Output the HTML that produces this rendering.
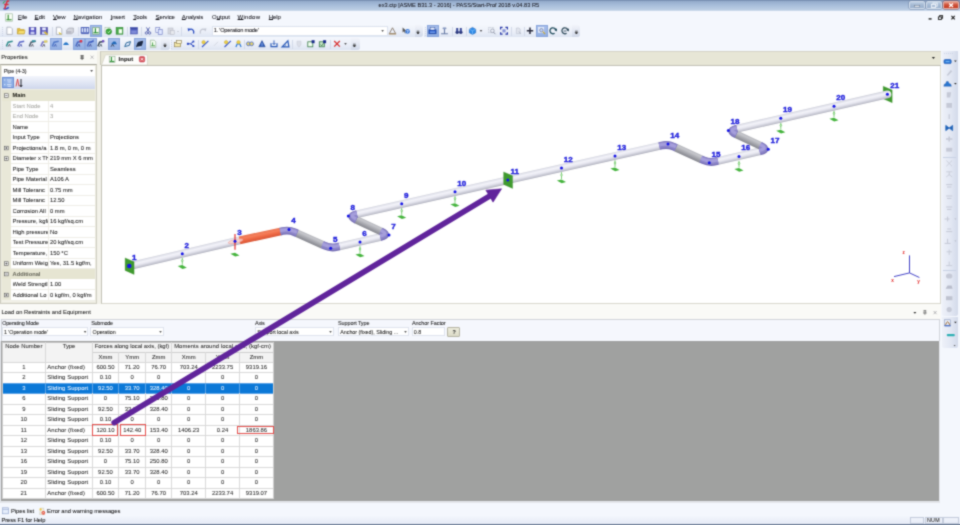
<!DOCTYPE html>
<html><head><meta charset="utf-8"><title>ex3.ctp</title>
<style>
html,body{margin:0;padding:0;}
body{width:960px;height:525px;overflow:hidden;position:relative;background:#f4f7fd;font-family:"Liberation Sans",sans-serif;}
.t{position:absolute;white-space:nowrap;overflow:visible;-webkit-text-stroke:0.06px currentColor;}
.r{position:absolute;box-sizing:border-box;}
u{text-decoration-thickness:inherit;text-underline-offset:inherit;}
svg{position:absolute;left:0;top:0;overflow:visible;}
#w{position:absolute;left:0;top:0;width:960px;height:525px;overflow:hidden;background:#f4f7fd;filter:url(#bl);}
</style></head><body><svg width="0" height="0" style="position:absolute"><filter id="bl" x="0" y="0" width="100%" height="100%" color-interpolation-filters="sRGB"><feConvolveMatrix order="3" kernelMatrix="1 3 1 3 12 3 1 3 1" divisor="28" edgeMode="duplicate" preserveAlpha="true"/></filter></svg><div id="w">
<div class="r" style="left:0.00px;top:0.00px;width:960.00px;height:11.20px;background:linear-gradient(#61779a 0,#93aacb 9%,#a6bcd9 45%,#bdcfe5 92%,#d9e3f1 100%);"></div>
<svg width="960" height="12"><path d="M3.4 8.6 Q6.2 9.6 8.8 7.4" stroke="#3a48c0" stroke-width="1.5" fill="none"/><path d="M3 3.6 Q3.6 1.6 5.4 1.2" stroke="#4aa060" stroke-width="1.1" fill="none"/><path d="M4.6 9 L7 1.6 Q7.6 0.6 9.2 1.4 M4.2 4.6 H8.6" stroke="#d83040" stroke-width="1.5" fill="none"/></svg>
<div class="t" style="left:378.50px;top:2.48px;font-size:5.70px;line-height:6.84px;height:6.84px;color:#1a1a22;letter-spacing:-0.022px;">ex3.ctp [ASME B31.3 - 2016] - PASS/Start-Prof 2018 v.04.83 R5</div>
<div class="r" style="left:909.40px;top:1.20px;width:15.60px;height:8.30px;background:linear-gradient(#bfd0e4,#a4b9d3 50%,#9cb2ce);border:0.7px solid #d3deec;border-radius:1.5px;box-shadow:0 0 0 0.5px #7388a8;"></div>
<div class="r" style="left:926.40px;top:1.20px;width:15.60px;height:8.30px;background:linear-gradient(#bfd0e4,#a4b9d3 50%,#9cb2ce);border:0.7px solid #d3deec;border-radius:1.5px;box-shadow:0 0 0 0.5px #7388a8;"></div>
<div class="r" style="left:943.40px;top:1.20px;width:15.40px;height:8.30px;background:linear-gradient(#e6a090,#d0543c 45%,#c43c24);border:0.7px solid #e8b0a4;border-radius:1.5px;box-shadow:0 0 0 0.5px #7a4a54;"></div>
<svg width="960" height="12"><rect x="914.4" y="5.6" width="5.4" height="1.4" fill="#fff" stroke="#5b6b82" stroke-width="0.4"/><rect x="933" y="3" width="4.2" height="3.2" fill="none" stroke="#eef3fa" stroke-width="0.9"/><rect x="931.4" y="4.4" width="4.2" height="3" fill="#a9bdd6" stroke="#eef3fa" stroke-width="0.9"/><path d="M949.2 3.6 L953 7 M953 3.6 L949.2 7" stroke="#fff" stroke-width="1.3"/></svg>
<div class="r" style="left:0.00px;top:11.20px;width:960.00px;height:13.30px;background:#f4f7fd;"></div>
<svg width="960" height="30"><rect x="5.7" y="13.8" width="6.6" height="7.4" fill="#f6fbf2" stroke="#9ab89a" stroke-width="0.6"/><path d="M8.2 14.8 V19.8 H11.6 M6.4 19.8 H8.2" stroke="#2a8a2a" stroke-width="1.1" fill="none"/></svg>
<div class="t" style="left:18.00px;top:14.20px;font-size:6.00px;line-height:7.20px;height:7.20px;color:#15151c;letter-spacing:-0.120px;text-decoration-thickness:0.45px;text-underline-offset:0.4px;"><u>F</u>ile</div>
<div class="t" style="left:34.60px;top:14.20px;font-size:6.00px;line-height:7.20px;height:7.20px;color:#15151c;letter-spacing:0.015px;text-decoration-thickness:0.45px;text-underline-offset:0.4px;"><u>E</u>dit</div>
<div class="t" style="left:53.00px;top:14.20px;font-size:6.00px;line-height:7.20px;height:7.20px;color:#15151c;letter-spacing:-0.120px;text-decoration-thickness:0.45px;text-underline-offset:0.4px;"><u>V</u>iew</div>
<div class="t" style="left:73.40px;top:14.20px;font-size:6.00px;line-height:7.20px;height:7.20px;color:#15151c;letter-spacing:0.065px;text-decoration-thickness:0.45px;text-underline-offset:0.4px;"><u>N</u>avigation</div>
<div class="t" style="left:110.60px;top:14.20px;font-size:6.00px;line-height:7.20px;height:7.20px;color:#15151c;letter-spacing:-0.120px;text-decoration-thickness:0.45px;text-underline-offset:0.4px;"><u>I</u>nsert</div>
<div class="t" style="left:133.20px;top:14.20px;font-size:6.00px;line-height:7.20px;height:7.20px;color:#15151c;letter-spacing:-0.041px;text-decoration-thickness:0.45px;text-underline-offset:0.4px;"><u>T</u>ools</div>
<div class="t" style="left:155.60px;top:14.20px;font-size:6.00px;line-height:7.20px;height:7.20px;color:#15151c;letter-spacing:-0.120px;text-decoration-thickness:0.45px;text-underline-offset:0.4px;"><u>S</u>ervice</div>
<div class="t" style="left:181.80px;top:14.20px;font-size:6.00px;line-height:7.20px;height:7.20px;color:#15151c;letter-spacing:-0.118px;text-decoration-thickness:0.45px;text-underline-offset:0.4px;"><u>A</u>nalysis</div>
<div class="t" style="left:212.00px;top:14.20px;font-size:6.00px;line-height:7.20px;height:7.20px;color:#15151c;letter-spacing:-0.002px;text-decoration-thickness:0.45px;text-underline-offset:0.4px;">O<u>u</u>tput</div>
<div class="t" style="left:237.60px;top:14.20px;font-size:6.00px;line-height:7.20px;height:7.20px;color:#15151c;letter-spacing:0.210px;text-decoration-thickness:0.45px;text-underline-offset:0.4px;"><u>W</u>indow</div>
<div class="t" style="left:268.80px;top:14.20px;font-size:6.00px;line-height:7.20px;height:7.20px;color:#15151c;letter-spacing:-0.120px;text-decoration-thickness:0.45px;text-underline-offset:0.4px;"><u>H</u>elp</div>
<svg width="960" height="30"><rect x="928.6" y="18.2" width="3" height="1.4" fill="#222"/><rect x="939.6" y="15.6" width="3" height="2.6" fill="none" stroke="#222" stroke-width="0.9"/><rect x="938.4" y="16.9" width="3" height="2.6" fill="#f4f7fd" stroke="#222" stroke-width="0.9"/><path d="M951.4 15.8 L954.8 19.4 M954.8 15.8 L951.4 19.4" stroke="#222" stroke-width="1.1"/></svg>
<div class="r" style="left:0.00px;top:24.50px;width:960.00px;height:26.00px;background:#f4f7fd;"></div>
<div class="r" style="left:0.00px;top:24.60px;width:423.00px;height:12.80px;background:linear-gradient(#f4f7fc,#ebeff8 55%,#dee5f2);border-radius:0 3px 3px 0;"></div>
<div class="r" style="left:424.00px;top:24.60px;width:155.60px;height:12.80px;background:linear-gradient(#f4f7fc,#ebeff8 55%,#dee5f2);border-radius:0 3px 3px 0;"></div>
<div class="r" style="left:0.00px;top:37.60px;width:170.00px;height:12.80px;background:linear-gradient(#f3f6fc,#eaeef8 55%,#dde4f1);border-radius:0 3px 3px 0;"></div>
<div class="r" style="left:170.60px;top:37.60px;width:189.40px;height:12.80px;background:linear-gradient(#f3f6fc,#eaeef8 55%,#dde4f1);border-radius:0 3px 3px 0;"></div>
<div class="r" style="left:414.60px;top:24.60px;width:8.40px;height:12.80px;background:linear-gradient(#f2f4fa,#e2e7f2 50%,#d0d8e8);border-radius:0 3px 3px 0;"></div>
<div class="r" style="left:571.60px;top:24.60px;width:8.40px;height:12.80px;background:linear-gradient(#f2f4fa,#e2e7f2 50%,#d0d8e8);border-radius:0 3px 3px 0;"></div>
<div class="r" style="left:161.40px;top:37.60px;width:8.40px;height:12.80px;background:linear-gradient(#f2f4fa,#e2e7f2 50%,#d0d8e8);border-radius:0 3px 3px 0;"></div>
<div class="r" style="left:351.40px;top:37.60px;width:8.40px;height:12.80px;background:linear-gradient(#f2f4fa,#e2e7f2 50%,#d0d8e8);border-radius:0 3px 3px 0;"></div>
<div class="r" style="left:90.00px;top:24.60px;width:12.00px;height:12.40px;background:linear-gradient(#a6bdea,#94b0e2);border:0.4px solid #8aa6dc;"></div>
<div class="r" style="left:426.50px;top:24.60px;width:12.00px;height:12.40px;background:linear-gradient(#a6bdea,#94b0e2);border:0.4px solid #8aa6dc;"></div>
<div class="r" style="left:536.00px;top:24.60px;width:12.00px;height:12.40px;background:linear-gradient(#a6bdea,#94b0e2);border:0.4px solid #8aa6dc;"></div>
<div class="r" style="left:211.50px;top:25.80px;width:176.50px;height:10.00px;background:#fff;border:0.5px solid #dde3ef;"></div>
<div class="t" style="left:213.70px;top:27.48px;font-size:5.70px;line-height:6.84px;height:6.84px;color:#15151c;letter-spacing:-0.231px;">1. 'Operation mode'</div>
<div class="r" style="left:49.50px;top:37.60px;width:12.00px;height:12.40px;background:linear-gradient(#a6bdea,#94b0e2);border:0.4px solid #8aa6dc;"></div>
<div class="r" style="left:73.00px;top:37.60px;width:12.00px;height:12.40px;background:linear-gradient(#a6bdea,#94b0e2);border:0.4px solid #8aa6dc;"></div>
<div class="r" style="left:84.50px;top:37.60px;width:12.00px;height:12.40px;background:linear-gradient(#a6bdea,#94b0e2);border:0.4px solid #8aa6dc;"></div>
<div class="r" style="left:108.00px;top:37.60px;width:12.00px;height:12.40px;background:linear-gradient(#a6bdea,#94b0e2);border:0.4px solid #8aa6dc;"></div>
<div class="r" style="left:133.50px;top:37.60px;width:12.00px;height:12.40px;background:linear-gradient(#a6bdea,#94b0e2);border:0.4px solid #8aa6dc;"></div>
<div class="r" style="left:2.20px;top:26.50px;width:1.00px;height:9.00px;background:repeating-linear-gradient(#ccd4e6 0,#ccd4e6 1px,transparent 1px,transparent 2px);"></div>
<div class="r" style="left:2.20px;top:39.50px;width:1.00px;height:9.00px;background:repeating-linear-gradient(#ccd4e6 0,#ccd4e6 1px,transparent 1px,transparent 2px);"></div>
<div class="r" style="left:424.60px;top:26.50px;width:1.00px;height:9.00px;background:repeating-linear-gradient(#ccd4e6 0,#ccd4e6 1px,transparent 1px,transparent 2px);"></div>
<div class="r" style="left:171.00px;top:39.50px;width:1.00px;height:9.00px;background:repeating-linear-gradient(#ccd4e6 0,#ccd4e6 1px,transparent 1px,transparent 2px);"></div>
<div class="r" style="left:51.50px;top:26.60px;width:0.60px;height:9.00px;background:#d3dae9;"></div>
<div class="r" style="left:77.50px;top:26.60px;width:0.60px;height:9.00px;background:#d3dae9;"></div>
<div class="r" style="left:126.50px;top:26.60px;width:0.60px;height:9.00px;background:#d3dae9;"></div>
<div class="r" style="left:141.00px;top:26.60px;width:0.60px;height:9.00px;background:#d3dae9;"></div>
<div class="r" style="left:181.00px;top:26.60px;width:0.60px;height:9.00px;background:#d3dae9;"></div>
<div class="r" style="left:451.50px;top:26.60px;width:0.60px;height:9.00px;background:#d3dae9;"></div>
<div class="r" style="left:466.00px;top:26.60px;width:0.60px;height:9.00px;background:#d3dae9;"></div>
<div class="r" style="left:511.00px;top:26.60px;width:0.60px;height:9.00px;background:#d3dae9;"></div>
<div class="r" style="left:523.50px;top:26.60px;width:0.60px;height:9.00px;background:#d3dae9;"></div>
<div class="r" style="left:198.00px;top:39.60px;width:0.60px;height:9.00px;background:#d3dae9;"></div>
<div class="r" style="left:243.50px;top:39.60px;width:0.60px;height:9.00px;background:#d3dae9;"></div>
<div class="r" style="left:292.00px;top:39.60px;width:0.60px;height:9.00px;background:#d3dae9;"></div>
<div class="r" style="left:329.50px;top:39.60px;width:0.60px;height:9.00px;background:#d3dae9;"></div>
<svg width="960" height="60"><g transform="translate(9.50 30.80)"><path d="M-2.6 -3.6 H1.2 L2.8 -2 V3.6 H-2.6 Z" fill="#fff" stroke="#8a90a0" stroke-width="0.6"/></g><g transform="translate(21.00 30.80)"><path d="M-3.6 -2.2 H-1 L-0.2 -1.2 H3.2 V3 H-3.6 Z" fill="#e9c23c" stroke="#b08a18" stroke-width="0.5"/><path d="M-3.6 3 L-2.2 -0.2 H4.2 L3.2 3 Z" fill="#f6de72" stroke="#b08a18" stroke-width="0.4"/></g><g transform="translate(32.50 30.80)"><rect x="-3.4" y="-3.4" width="6.8" height="6.8" fill="#4a48c0" stroke="#2c2a88" stroke-width="0.5"/><rect x="-1.8" y="-3.2" width="3.6" height="2.6" fill="#e8ecff"/><rect x="-2" y="0.8" width="4" height="2.6" fill="#c8ccf0"/></g><g transform="translate(44.00 30.80)"><rect x="-3.4" y="-3.4" width="6.8" height="6.8" fill="#5a58b8" stroke="#2c2a88" stroke-width="0.5"/><rect x="-1.8" y="-3.2" width="3.6" height="2.6" fill="#e8ecff"/><rect x="-2" y="0.8" width="4" height="2.6" fill="#c8ccf0"/><path d="M0.5 1 L3.6 3.8" stroke="#d8b830" stroke-width="1.6"/></g><g transform="translate(59.00 30.80)"><path d="M-2.6 -3.6 H1.2 L2.8 -2 V3.6 H-2.6 Z" fill="#fff" stroke="#8a90a0" stroke-width="0.6"/><path d="M-0.5 1 L3.4 3.4 L0.5 3.6 Z" fill="#d8c040"/></g><g transform="translate(70.00 30.80)"><path d="M-3.4 -0.6 L-1.4 -2.8 H3.4 V1.6 L1.4 3 H-3.4 Z" fill="#d4d6de" stroke="#8a8c98" stroke-width="0.5"/><rect x="-3.2" y="0.2" width="4.6" height="2.4" fill="#b8bac6"/></g><g transform="translate(85.00 30.80)"><rect x="-3.8" y="-3.2" width="7.6" height="5.2" fill="#e8f0ff" stroke="#3a50b0" stroke-width="0.9"/><path d="M-1.3 -3 V1.4 M1.3 -3 V1.4 M-3.8 2.8 H3.8" stroke="#3a50b0" stroke-width="0.9"/></g><g transform="translate(96.00 30.80)"><rect x="-3.2" y="-3.4" width="6.4" height="6.8" fill="#f4fbf0" stroke="#6c9a6c" stroke-width="0.6"/><path d="M-0.6 -2.6 V2 H2.6 M-2.6 2 H-0.6" stroke="#1f8a2a" stroke-width="1.1" fill="none"/></g><g transform="translate(108.00 30.80)"><rect x="-3" y="-3.4" width="5" height="6" fill="#f4fbf0" stroke="#9ab89a" stroke-width="0.5"/><circle cx="0.8" cy="0.8" r="2.8" fill="#3aa83a" stroke="#1d7a22" stroke-width="0.5"/><path d="M-0.6 0.8 L0.6 2 L2.4 -0.4" stroke="#d8ffd0" stroke-width="0.8" fill="none"/></g><g transform="translate(119.50 30.80)"><rect x="-3.4" y="-3.4" width="6.8" height="6.8" fill="#4aa84a" stroke="#1d7a22" stroke-width="0.5"/><rect x="-0.8" y="-1.6" width="3.4" height="4.2" fill="#f4fff0"/></g><g transform="translate(134.00 30.80)"><rect x="-3.4" y="-3.2" width="6.8" height="6.4" fill="#5866c4" stroke="#3c4aa6" stroke-width="0.5"/><rect x="-3.4" y="-3.2" width="6.8" height="1.8" fill="#3c4aa6"/><path d="M-2.6 0.4 H2.6 M-2.6 2 H2.6" stroke="#aab6ee" stroke-width="0.7"/></g><g transform="translate(148.00 30.80)"><path d="M-1.6 -3.4 L1.2 1 M1.6 -3.4 L-1.2 1" stroke="#4a58a8" stroke-width="0.9"/><circle cx="-1.6" cy="2.2" r="1.2" fill="none" stroke="#4a58a8" stroke-width="0.8"/><circle cx="1.6" cy="2.2" r="1.2" fill="none" stroke="#4a58a8" stroke-width="0.8"/></g><g transform="translate(159.00 30.80)"><rect x="-3.2" y="-3.2" width="4" height="5" fill="#eef2ff" stroke="#6a78c0" stroke-width="0.6"/><rect x="-0.8" y="-1.4" width="4" height="5" fill="#dfe6ff" stroke="#6a78c0" stroke-width="0.6"/></g><g transform="translate(171.00 30.80)"><rect x="-3" y="-2.8" width="5" height="6" fill="#d6d8e0" stroke="#b4b6c2" stroke-width="0.5"/><rect x="-0.4" y="-0.4" width="3.6" height="4" fill="#e6e8ee" stroke="#b4b6c2" stroke-width="0.5"/><g transform="translate(7 0.6)"><path d="M-1 -0.5 H1 L0 0.7 Z" fill="#b0b4c0"/></g></g><g transform="translate(191.00 30.80)"><path d="M2.6 2.8 C3.6 -1 0.6 -2.6 -1.8 -0.8" stroke="#2a4cc0" stroke-width="1.3" fill="none"/><path d="M-3.4 -2.6 L-0.6 -2 L-2.8 0.8 Z" fill="#2a4cc0"/></g><g transform="translate(203.00 30.80)"><path d="M-2.6 2.8 C-3.6 -1 -0.6 -2.6 1.8 -0.8" stroke="#c2c6d2" stroke-width="1.2" fill="none"/><path d="M3.4 -2.6 L0.6 -2 L2.8 0.8 Z" fill="#c2c6d2"/></g><g transform="translate(382.60 30.80)"><path d="M-1.3 -0.6 H1.3 L0 0.9 Z" fill="#222"/></g><g transform="translate(392.50 30.80)"><path d="M-3.2 2.8 L0 -3 L3.2 2.8 Z" fill="none" stroke="#7a6a58" stroke-width="0.8"/><path d="M-3.6 3.2 H3.6" stroke="#b09060" stroke-width="0.9"/></g><g transform="translate(406.00 30.80)"><path d="M-3.4 -3.2 L-3.4 1.6 L-2 0.4 L-1 2.6 L-0.2 2.2 L-1.2 0.2 L0.2 0 Z" fill="#555" /><circle cx="1.6" cy="0.6" r="2.3" fill="#3a78d8"/><text x="0.6" y="2" font-size="3.6" fill="#fff" font-weight="bold" font-family="Liberation Sans, sans-serif">?</text></g><g transform="translate(418.00 30.80)"><path d="M-1.3 0.4 H1.3 M-1.2 1.8 H1.2 L0 3.2 Z" stroke="#222" stroke-width="0.7" fill="#222"/></g><g transform="translate(432.50 30.80)"><rect x="-3.6" y="-1" width="7.2" height="4" fill="#2458c8" stroke="#16388a" stroke-width="0.5"/><rect x="-2.4" y="-3.4" width="4.8" height="2.6" fill="#e6eeff" stroke="#16388a" stroke-width="0.4"/><rect x="-2.6" y="0.8" width="5.2" height="1" fill="#9cc0ff"/></g><g transform="translate(444.50 30.80)"><path d="M-3.4 3 H3.4 M0 3 V-2.2 M-1.8 -2.4 H1.8" stroke="#6a7ea8" stroke-width="1.1" fill="none"/><rect x="-1.4" y="-3.2" width="2.8" height="1.6" fill="#8a9cc4"/></g><g transform="translate(459.00 30.80)"><circle cx="-1.8" cy="1.4" r="1.7" fill="#27357a"/><circle cx="1.8" cy="1.4" r="1.7" fill="#27357a"/><rect x="-2.8" y="-2.8" width="2" height="3.6" fill="#3a4a98"/><rect x="0.8" y="-2.8" width="2" height="3.6" fill="#3a4a98"/></g><g transform="translate(472.50 30.80)"><path d="M-3.2 -1.6 L0 -3.4 L3.2 -1.6 V2 L0 3.6 L-3.2 2 Z" fill="#2c8ae8" stroke="#1a5cb0" stroke-width="0.5"/><path d="M-3.2 -1.6 L0 0 L3.2 -1.6 M0 0 V3.6" stroke="#9fd0ff" stroke-width="0.5" fill="none"/></g><g transform="translate(481.00 30.80)"><path d="M-1.3 -0.6 H1.3 L0 0.9 Z" fill="#222"/></g><g transform="translate(492.00 30.80)"><rect x="-3.4" y="-3.2" width="5" height="5" fill="none" stroke="#a8acba" stroke-width="0.6" stroke-dasharray="1 0.6"/><circle cx="0.4" cy="0" r="1.8" fill="#eef2fa" stroke="#8e94a6" stroke-width="0.7"/><path d="M1.6 1.4 L3.4 3.4" stroke="#8e94a6" stroke-width="1"/></g><g transform="translate(504.00 30.80)"><path d="M-3.4 -1.4 V-3.4 H-1.4 M1.4 -3.4 H3.4 V-1.4 M3.4 1.4 V3.4 H1.4 M-1.4 3.4 H-3.4 V1.4" stroke="#2a3aa8" stroke-width="1.2" fill="none"/><rect x="-1.6" y="-1.6" width="3.2" height="3.2" fill="#8a96d8"/></g><g transform="translate(518.00 30.80)"><path d="M-1.6 -2.8 H1 L2.2 -1.6 V2.8 H-1.6 Z" fill="#e2e5ee" stroke="#b6bac8" stroke-width="0.5"/><path d="M0.8 0.6 L2.8 3.2" stroke="#b6bac8" stroke-width="0.9"/></g><g transform="translate(530.00 30.80)"><path d="M0 -3.2 V3.2 M-3.2 0 H3.2" stroke="#26283a" stroke-width="1.5"/></g><g transform="translate(542.00 30.80)"><rect x="-3.6" y="-3.4" width="5.4" height="5" fill="#dfe8fb" stroke="#f4f7ff" stroke-width="0.5"/><circle cx="-0.6" cy="-0.6" r="1.7" fill="#c4d4f4" stroke="#5a6a90" stroke-width="0.6"/><path d="M0.8 0.8 L3.2 3.4" stroke="#c8a838" stroke-width="1.1"/></g><g transform="translate(553.00 30.80)"><path d="M2.9 -0.4 A3 3 0 1 0 1.6 2.5" stroke="#1e4a5a" stroke-width="1.3" fill="none"/><path d="M1.2 -1 L4 -2.4 L3.8 0.8 Z" fill="#1e4a5a"/></g><g transform="translate(565.00 30.80)"><path d="M2.9 -0.4 A3 3 0 1 0 1.6 2.5" stroke="#2c4858" stroke-width="1.2" fill="none"/><path d="M1.2 -1 L4 -2.4 L3.8 0.8 Z" fill="#2c4858"/><path d="M-1.4 0.2 H1.4" stroke="#2c4858" stroke-width="0.9"/></g><g transform="translate(576.40 30.80)"><path d="M-1.3 0.4 H1.3 M-1.2 1.8 H1.2 L0 3.2 Z" stroke="#222" stroke-width="0.7" fill="#222"/></g><g transform="translate(9.50 43.80)"><path d="M-3.2 2.6 L-1.4 -1.6 L3.2 -2.6" stroke="#2f8c8c" stroke-width="1.4" fill="none"/><path d="M-1.6 3 L0 0.4 L0.8 2.8" stroke="#4a4a58" stroke-width="0.8" fill="none"/></g><g transform="translate(21.00 43.80)"><path d="M-3.2 2.6 L-1.4 -1.6 L3.2 -2.6" stroke="#5a68c8" stroke-width="1.4" fill="none"/><path d="M-1.6 3 L0 0.4 L0.8 2.8" stroke="#3a48a8" stroke-width="0.8" fill="none"/></g><g transform="translate(32.50 43.80)"><path d="M-3.2 2.6 L-1.4 -1.6 L3.2 -2.6" stroke="#4a5a68" stroke-width="1.4" fill="none"/><path d="M-1.6 3 L0 0.4 L0.8 2.8" stroke="#4a4a58" stroke-width="0.8" fill="none"/><rect x="-0.6" y="-3.6" width="3.6" height="1.8" fill="#2f8c9c"/></g><g transform="translate(44.00 43.80)"><path d="M-3.2 2.6 L-1.4 -1.6 L3.2 -2.6" stroke="#7a78c8" stroke-width="1.4" fill="none"/><path d="M-1.6 3 L0 0.4 L0.8 2.8" stroke="#4a4a58" stroke-width="0.8" fill="none"/><rect x="0" y="-3.4" width="3.4" height="2.2" fill="#e0d060"/></g><g transform="translate(55.50 43.80)"><path d="M-3.2 2.6 L-1.4 -1.6 L3.2 -2.6" stroke="#5078c8" stroke-width="1.4" fill="none"/><path d="M-1.6 3 L0 0.4 L0.8 2.8" stroke="#3a58b0" stroke-width="0.8" fill="none"/></g><g transform="translate(66.00 43.80)"><path d="M-3 1.2 H3 L1.6 -0.8 Q0 -2.2 -1.6 -0.8 Z" fill="#2a78c8"/></g><g transform="translate(79.00 43.80)"><path d="M-3.2 2.6 L-1.4 -1.6 L3.2 -2.6" stroke="#4a68c0" stroke-width="1.4" fill="none"/><path d="M-1.6 3 L0 0.4 L0.8 2.8" stroke="#3a4890" stroke-width="0.8" fill="none"/><rect x="0.6" y="-3.8" width="2.6" height="2.4" fill="#e03848"/></g><g transform="translate(90.50 43.80)"><path d="M-3.2 2.6 L-1.4 -1.6 L3.2 -2.6" stroke="#4a68c0" stroke-width="1.4" fill="none"/><path d="M-1.6 3 L0 0.4 L0.8 2.8" stroke="#3a4890" stroke-width="0.8" fill="none"/><path d="M0 -1 L3 -3.6" stroke="#3050c0" stroke-width="1"/></g><g transform="translate(101.00 43.80)"><path d="M-3.2 2.6 L-1.4 -1.6 L3.2 -2.6" stroke="#3a4a5a" stroke-width="1.4" fill="none"/><path d="M-1.6 3 L0 0.4 L0.8 2.8" stroke="#3a4a5a" stroke-width="0.8" fill="none"/><rect x="1" y="-3.6" width="2.2" height="2" fill="#6a48c0"/></g><g transform="translate(114.00 43.80)"><path d="M-3 0.4 H3 L1.4 -2.4 H-0.6 Z" fill="#1f68b8"/><path d="M-3 3 L-1.4 0.4 L0 2.8" stroke="#33425a" stroke-width="0.9" fill="none"/></g><g transform="translate(127.50 43.80)"><path d="M-2.8 2.8 L-1.2 -1 L3 -2.2 L1.8 1.6 Z" fill="#dfe8fb" stroke="#2f6a9a" stroke-width="1"/></g><g transform="translate(139.50 43.80)"><path d="M-3 2.8 L-1.4 -1.4 L3.2 -2.6 L2 1.6 Z" fill="#1a2a4a" stroke="#101828" stroke-width="0.8"/><path d="M-2.4 3.4 H1.6" stroke="#e8eefc" stroke-width="0.8"/></g><g transform="translate(153.00 43.80)"><path d="M-2.6 -3.6 H1.2 L2.8 -2 V3.6 H-2.6 Z" fill="#f6fff2" stroke="#8aa88a" stroke-width="0.6"/><path d="M-0.4 -1.4 V2 H2 M-1.8 2 H-0.4" stroke="#2a8a2a" stroke-width="0.8" fill="none"/></g><g transform="translate(165.00 43.80)"><path d="M-1.3 0.4 H1.3 M-1.2 1.8 H1.2 L0 3.2 Z" stroke="#222" stroke-width="0.7" fill="#222"/></g><g transform="translate(178.00 43.80)"><rect x="-3.4" y="-1.4" width="6" height="4.4" fill="#f4e8a8" stroke="#8a7a48" stroke-width="0.6"/><rect x="-1.4" y="-3.2" width="4.8" height="3" fill="#fbf6d8" stroke="#8a7a48" stroke-width="0.6"/></g><g transform="translate(190.50 43.80)"><path d="M-3 0 H0 M0 0 L3 -2.2 M0 0 L3 2.2" stroke="#2a48c0" stroke-width="1" fill="none"/><rect x="-3.6" y="-1" width="2" height="2" fill="#2a48c0"/><rect x="2" y="-3.2" width="1.8" height="1.8" fill="#2a48c0"/><rect x="2" y="1.4" width="1.8" height="1.8" fill="#2a48c0"/></g><g transform="translate(205.00 43.80)"><path d="M-3 3.2 L3.4 -3" stroke="#3a58c8" stroke-width="1.1"/><circle cx="-1.4" cy="-1.6" r="1.7" fill="#ecd048" stroke="#b89a28" stroke-width="0.4"/></g><g transform="translate(216.00 43.80)"><path d="M-2 2 L2 -2" stroke="#d4d8e2" stroke-width="1"/></g><g transform="translate(227.50 43.80)"><path d="M-3 3.2 L3.4 -3" stroke="#3a58c8" stroke-width="1.1"/><circle cx="-1.4" cy="-1.6" r="1.7" fill="#ecd048" stroke="#b89a28" stroke-width="0.4"/></g><g transform="translate(238.50 43.80)"><path d="M-2.6 3.2 L-1.2 0 L1.2 0 L2.6 3.2" stroke="#2a78d8" stroke-width="1.2" fill="none"/><circle cx="0" cy="-1.6" r="1.7" fill="#ecd048" stroke="#b89a28" stroke-width="0.4"/></g><g transform="translate(250.00 43.80)"><circle cx="-1.6" cy="0" r="1.9" fill="#e8d468" stroke="#4a68c8" stroke-width="0.8"/><circle cx="1.6" cy="0" r="1.9" fill="#e8d468" stroke="#4a68c8" stroke-width="0.8"/></g><g transform="translate(262.00 43.80)"><path d="M-3.2 3 L0 -3.2 L3.2 3 Z" fill="#2a5ab8" stroke="#1c3c88" stroke-width="0.5"/><path d="M0 -1 V2" stroke="#bcd0ff" stroke-width="0.7"/></g><g transform="translate(274.00 43.80)"><path d="M-3 -0.6 V2.8 H3 V-0.6" stroke="#2a5ab8" stroke-width="1.2" fill="none"/><path d="M0 -3.4 V0.6 M-1.4 -0.8 L0 0.8 L1.4 -0.8" stroke="#2a5ab8" stroke-width="0.9" fill="none"/></g><g transform="translate(285.50 43.80)"><path d="M-3.4 3 H3.4 L2.4 -3 Z" fill="none" stroke="#2a5ab8" stroke-width="1.2"/><path d="M-1 3 A2.6 2.6 0 0 1 0.6 0.8" stroke="#2a5ab8" stroke-width="0.7" fill="none"/></g><g transform="translate(299.00 43.80)"><path d="M-2 -2.6 H2 V0.4 L0.6 3 H-0.6 L-2 0.4 Z" fill="#dcdfe8" stroke="#c4c8d4" stroke-width="0.5"/></g><g transform="translate(311.00 43.80)"><rect x="-3.2" y="-2" width="5" height="5" fill="#f2fff0" stroke="#3a7a4a" stroke-width="0.8"/><rect x="0.6" y="-3.6" width="3" height="3" fill="#1a2a8a"/></g><g transform="translate(322.50 43.80)"><rect x="-3.2" y="-2" width="5" height="5" fill="#c8e8c8" stroke="#3a7a4a" stroke-width="0.8"/><rect x="0.6" y="-3.6" width="3" height="3" fill="#1a2a8a"/><path d="M-2 0.8 L-0.6 2 L1 -0.6" stroke="#2a6a3a" stroke-width="0.7" fill="none"/></g><g transform="translate(337.00 43.80)"><path d="M-2.8 -2.8 L2.8 2.8 M2.8 -2.8 L-2.8 2.8" stroke="#d83030" stroke-width="1.3"/></g><g transform="translate(345.50 43.80)"><path d="M-1.3 -0.6 H1.3 L0 0.9 Z" fill="#222"/></g><g transform="translate(354.40 43.80)"><path d="M-1.3 0.4 H1.3 M-1.2 1.8 H1.2 L0 3.2 Z" stroke="#222" stroke-width="0.7" fill="#222"/></g></svg>
<div class="r" style="left:0.00px;top:50.50px;width:941.00px;height:254.00px;background:#f3f2ea;"></div>
<div class="r" style="left:0.00px;top:50.80px;width:97.20px;height:13.40px;background:#f9f9f5;"></div>
<div class="t" style="left:1.20px;top:53.66px;font-size:5.90px;line-height:7.08px;height:7.08px;color:#1c1c1c;letter-spacing:-0.049px;">Properties</div>
<svg width="960" height="70"><path d="M80.6 55.6 H83.6 M81.2 57 H83 M81.2 55.6 V58.2 M83 55.6 V58.2 M80.4 58.4 H83.8 M82.1 58.4 V60" stroke="#333" stroke-width="0.7" fill="none"/><path d="M90.6 55.6 L93.6 58.8 M93.6 55.6 L90.6 58.8" stroke="#9a9aa0" stroke-width="0.6"/></svg>
<div class="r" style="left:0.00px;top:63.80px;width:97.20px;height:240.00px;background:#ecebe0;border:1px solid #cfcec2;border-top:1.9px solid #a5a49b;"></div>
<div class="r" style="left:1.60px;top:66.20px;width:93.60px;height:9.40px;background:#fff;"></div>
<div class="t" style="left:3.80px;top:67.70px;font-size:5.50px;line-height:6.60px;height:6.60px;color:#1c1c1c;letter-spacing:-0.165px;">Pipe (4-3)</div>
<svg width="960" height="90"><path d="M90.2 70.2 H93 L91.6 71.8 Z" fill="#222"/></svg>
<div class="r" style="left:1.60px;top:75.60px;width:93.60px;height:13.80px;background:linear-gradient(#f3f5fc,#e3e8f5 45%,#cfd7ec);"></div>
<div class="r" style="left:1.80px;top:77.00px;width:12.00px;height:10.80px;background:#8fb0e6;border:0.5px solid #6c8ed2;"></div>
<svg width="960" height="95"><path d="M4 80 H5.4 M4 84.6 H5.4 M7 80 H11.4 M7 84.6 H11.4 M7.6 82 H11 M7.6 86.4 H11" stroke="#e8f0ff" stroke-width="0.8"/><path d="M16 86.4 L17.6 79 L19 86.4" stroke="#d83a3a" stroke-width="0.9" fill="none"/><path d="M21 79 V86.6 M19.8 85 L21 86.8 L22.2 85" stroke="#15151c" stroke-width="0.9" fill="none"/></svg>
<div class="r" style="left:1.60px;top:90.30px;width:93.60px;height:210.00px;background:#fff;"></div>
<div class="r" style="left:1.60px;top:90.30px;width:9.60px;height:210.00px;background:#e9e8d8;"></div>
<div class="r" style="left:1.60px;top:300.30px;width:93.60px;height:1.70px;background:#f2f1e8;"></div>
<div class="r" style="left:1.60px;top:90.30px;width:93.60px;height:10.50px;background:#e6e5d2;"></div>
<div class="t" style="left:12.60px;top:92.13px;font-size:5.70px;line-height:6.84px;height:6.84px;color:#26261e;font-weight:bold;">Main</div>
<div class="t" style="left:12.6px;top:100.80px;width:35.2px;height:10.50px;overflow:hidden;font-size:5.85px;line-height:10.50px;color:#a9a9a4">Start Node</div>
<div class="t" style="left:50px;top:100.80px;width:44.6px;height:10.50px;overflow:hidden;font-size:5.85px;line-height:10.50px;color:#a9a9a4">4</div>
<div class="r" style="left:11.20px;top:110.80px;width:84.00px;height:0.60px;background:#efeee7;"></div>
<div class="t" style="left:12.6px;top:111.30px;width:35.2px;height:10.50px;overflow:hidden;font-size:5.85px;line-height:10.50px;color:#a9a9a4">End Node</div>
<div class="t" style="left:50px;top:111.30px;width:44.6px;height:10.50px;overflow:hidden;font-size:5.85px;line-height:10.50px;color:#a9a9a4">3</div>
<div class="r" style="left:11.20px;top:121.30px;width:84.00px;height:0.60px;background:#efeee7;"></div>
<div class="t" style="left:12.6px;top:121.80px;width:35.2px;height:10.50px;overflow:hidden;font-size:5.85px;line-height:10.50px;color:#1a1a1a">Name</div>
<div class="r" style="left:11.20px;top:131.80px;width:84.00px;height:0.60px;background:#efeee7;"></div>
<div class="t" style="left:12.6px;top:132.30px;width:35.2px;height:10.50px;overflow:hidden;font-size:5.85px;line-height:10.50px;color:#1a1a1a">Input Type</div>
<div class="t" style="left:50px;top:132.30px;width:44.6px;height:10.50px;overflow:hidden;font-size:5.85px;line-height:10.50px;color:#1a1a1a">Projections</div>
<div class="r" style="left:11.20px;top:142.30px;width:84.00px;height:0.60px;background:#efeee7;"></div>
<div class="t" style="left:12.6px;top:142.80px;width:35.2px;height:10.50px;overflow:hidden;font-size:5.85px;line-height:10.50px;color:#1a1a1a">Projections/a</div>
<div class="t" style="left:50px;top:142.80px;width:44.6px;height:10.50px;overflow:hidden;font-size:5.85px;line-height:10.50px;color:#1a1a1a">1.8 m, 0 m, 0 m</div>
<div class="r" style="left:11.20px;top:152.80px;width:84.00px;height:0.60px;background:#efeee7;"></div>
<div class="t" style="left:12.6px;top:153.30px;width:35.2px;height:10.50px;overflow:hidden;font-size:5.85px;line-height:10.50px;color:#1a1a1a">Diameter x Th</div>
<div class="t" style="left:50px;top:153.30px;width:44.6px;height:10.50px;overflow:hidden;font-size:5.85px;line-height:10.50px;color:#1a1a1a">219 mm X 6 mm</div>
<div class="r" style="left:11.20px;top:163.30px;width:84.00px;height:0.60px;background:#efeee7;"></div>
<div class="t" style="left:12.6px;top:163.80px;width:35.2px;height:10.50px;overflow:hidden;font-size:5.85px;line-height:10.50px;color:#1a1a1a">Pipe Type</div>
<div class="t" style="left:50px;top:163.80px;width:44.6px;height:10.50px;overflow:hidden;font-size:5.85px;line-height:10.50px;color:#1a1a1a">Seamless</div>
<div class="r" style="left:11.20px;top:173.80px;width:84.00px;height:0.60px;background:#efeee7;"></div>
<div class="t" style="left:12.6px;top:174.30px;width:35.2px;height:10.50px;overflow:hidden;font-size:5.85px;line-height:10.50px;color:#1a1a1a">Pipe Material</div>
<div class="t" style="left:50px;top:174.30px;width:44.6px;height:10.50px;overflow:hidden;font-size:5.85px;line-height:10.50px;color:#1a1a1a">A106 A</div>
<div class="r" style="left:11.20px;top:184.30px;width:84.00px;height:0.60px;background:#efeee7;"></div>
<div class="t" style="left:12.6px;top:184.80px;width:35.2px;height:10.50px;overflow:hidden;font-size:5.85px;line-height:10.50px;color:#1a1a1a">Mill Toleranc</div>
<div class="t" style="left:50px;top:184.80px;width:44.6px;height:10.50px;overflow:hidden;font-size:5.85px;line-height:10.50px;color:#1a1a1a">0.75 mm</div>
<div class="r" style="left:11.20px;top:194.80px;width:84.00px;height:0.60px;background:#efeee7;"></div>
<div class="t" style="left:12.6px;top:195.30px;width:35.2px;height:10.50px;overflow:hidden;font-size:5.85px;line-height:10.50px;color:#1a1a1a">Mill Toleranc</div>
<div class="t" style="left:50px;top:195.30px;width:44.6px;height:10.50px;overflow:hidden;font-size:5.85px;line-height:10.50px;color:#1a1a1a">12.50</div>
<div class="r" style="left:11.20px;top:205.30px;width:84.00px;height:0.60px;background:#efeee7;"></div>
<div class="t" style="left:12.6px;top:205.80px;width:35.2px;height:10.50px;overflow:hidden;font-size:5.85px;line-height:10.50px;color:#1a1a1a">Corrosion All</div>
<div class="t" style="left:50px;top:205.80px;width:44.6px;height:10.50px;overflow:hidden;font-size:5.85px;line-height:10.50px;color:#1a1a1a">0 mm</div>
<div class="r" style="left:11.20px;top:215.80px;width:84.00px;height:0.60px;background:#efeee7;"></div>
<div class="t" style="left:12.6px;top:216.30px;width:35.2px;height:10.50px;overflow:hidden;font-size:5.85px;line-height:10.50px;color:#1a1a1a">Pressure, kgf/</div>
<div class="t" style="left:50px;top:216.30px;width:44.6px;height:10.50px;overflow:hidden;font-size:5.85px;line-height:10.50px;color:#1a1a1a">16 kgf/sq.cm</div>
<div class="r" style="left:11.20px;top:226.30px;width:84.00px;height:0.60px;background:#efeee7;"></div>
<div class="t" style="left:12.6px;top:226.80px;width:35.2px;height:10.50px;overflow:hidden;font-size:5.85px;line-height:10.50px;color:#1a1a1a">High pressure</div>
<div class="t" style="left:50px;top:226.80px;width:44.6px;height:10.50px;overflow:hidden;font-size:5.85px;line-height:10.50px;color:#1a1a1a">No</div>
<div class="r" style="left:11.20px;top:236.80px;width:84.00px;height:0.60px;background:#efeee7;"></div>
<div class="t" style="left:12.6px;top:237.30px;width:35.2px;height:10.50px;overflow:hidden;font-size:5.85px;line-height:10.50px;color:#1a1a1a">Test Pressure,</div>
<div class="t" style="left:50px;top:237.30px;width:44.6px;height:10.50px;overflow:hidden;font-size:5.85px;line-height:10.50px;color:#1a1a1a">20 kgf/sq.cm</div>
<div class="r" style="left:11.20px;top:247.30px;width:84.00px;height:0.60px;background:#efeee7;"></div>
<div class="t" style="left:12.6px;top:247.80px;width:35.2px;height:10.50px;overflow:hidden;font-size:5.85px;line-height:10.50px;color:#1a1a1a">Temperature,</div>
<div class="t" style="left:50px;top:247.80px;width:44.6px;height:10.50px;overflow:hidden;font-size:5.85px;line-height:10.50px;color:#1a1a1a">150 °C</div>
<div class="r" style="left:11.20px;top:257.80px;width:84.00px;height:0.60px;background:#efeee7;"></div>
<div class="t" style="left:12.6px;top:258.30px;width:35.2px;height:10.50px;overflow:hidden;font-size:5.85px;line-height:10.50px;color:#1a1a1a">Uniform Weig</div>
<div class="t" style="left:50px;top:258.30px;width:44.6px;height:10.50px;overflow:hidden;font-size:5.85px;line-height:10.50px;color:#1a1a1a">Yes, 31.5 kgf/m,</div>
<div class="r" style="left:11.20px;top:268.30px;width:84.00px;height:0.60px;background:#efeee7;"></div>
<div class="r" style="left:1.60px;top:268.80px;width:93.60px;height:10.50px;background:#e6e5d2;"></div>
<div class="t" style="left:12.60px;top:270.63px;font-size:5.70px;line-height:6.84px;height:6.84px;color:#6c6c60;font-weight:bold;">Additional</div>
<div class="t" style="left:12.6px;top:279.30px;width:35.2px;height:10.50px;overflow:hidden;font-size:5.85px;line-height:10.50px;color:#1a1a1a">Weld Strengtl</div>
<div class="t" style="left:50px;top:279.30px;width:44.6px;height:10.50px;overflow:hidden;font-size:5.85px;line-height:10.50px;color:#1a1a1a">1.00</div>
<div class="r" style="left:11.20px;top:289.30px;width:84.00px;height:0.60px;background:#efeee7;"></div>
<div class="t" style="left:12.6px;top:289.80px;width:35.2px;height:10.50px;overflow:hidden;font-size:5.85px;line-height:10.50px;color:#1a1a1a">Additional Lo</div>
<div class="t" style="left:50px;top:289.80px;width:44.6px;height:10.50px;overflow:hidden;font-size:5.85px;line-height:10.50px;color:#1a1a1a">0 kgf/m, 0 kgf/m</div>
<div class="r" style="left:11.20px;top:299.80px;width:84.00px;height:0.60px;background:#efeee7;"></div>
<div class="r" style="left:48.20px;top:100.80px;width:0.60px;height:168.00px;background:#efeee7;"></div>
<div class="r" style="left:48.20px;top:279.30px;width:0.60px;height:21.00px;background:#efeee7;"></div>
<svg width="960" height="310"><rect x="4.6" y="93.75" width="3.6" height="3.6" fill="#fff" stroke="#555" stroke-width="0.6"/><path d="M5.4 95.55 H7.4 " stroke="#222" stroke-width="0.6"/><rect x="4.6" y="146.25" width="3.6" height="3.6" fill="#fff" stroke="#555" stroke-width="0.6"/><path d="M5.4 148.05 H7.4 M6.4 147.05 V149.05" stroke="#222" stroke-width="0.6"/><rect x="4.6" y="156.75" width="3.6" height="3.6" fill="#fff" stroke="#555" stroke-width="0.6"/><path d="M5.4 158.55 H7.4 M6.4 157.55 V159.55" stroke="#222" stroke-width="0.6"/><rect x="4.6" y="261.75" width="3.6" height="3.6" fill="#fff" stroke="#555" stroke-width="0.6"/><path d="M5.4 263.55 H7.4 M6.4 262.55 V264.55" stroke="#222" stroke-width="0.6"/><rect x="4.6" y="272.25" width="3.6" height="3.6" fill="#fff" stroke="#555" stroke-width="0.6"/><path d="M5.4 274.05 H7.4 " stroke="#222" stroke-width="0.6"/><rect x="4.6" y="293.25" width="3.6" height="3.6" fill="#fff" stroke="#555" stroke-width="0.6"/><path d="M5.4 295.05 H7.4 M6.4 294.05 V296.05" stroke="#222" stroke-width="0.6"/></svg>
<div class="r" style="left:100.00px;top:51.20px;width:841.00px;height:14.00px;background:#e7e6d6;border-left:0.6px solid #c9c8ba;border-top:0.6px solid #d5d4c6;"></div>
<svg width="960" height="70"><path d="M101.6 65 L105.2 55.6 Q105.6 54.8 106.6 54.8 H146.2 Q147.4 54.8 147.4 56 V65 Z" fill="#fdfdfb" stroke="#c4c3b6" stroke-width="0.5"/><rect x="109.2" y="56.2" width="5.8" height="6.4" fill="#f4fbf0" stroke="#7a9a7a" stroke-width="0.5"/><path d="M111.4 57 V61.4 H114.4 M109.8 61.4 H111.4" stroke="#1f8a2a" stroke-width="1" fill="none"/><rect x="139.3" y="56.6" width="5.4" height="5.4" rx="1.2" fill="#d9525c" stroke="#b83444" stroke-width="0.5"/><path d="M140.8 58.1 L143.2 60.5 M143.2 58.1 L140.8 60.5" stroke="#fff" stroke-width="0.9"/><path d="M931.8 57 H935 L933.4 59 Z" fill="#222"/></svg>
<div class="t" style="left:118.60px;top:56.06px;font-size:5.90px;line-height:7.08px;height:7.08px;color:#111;letter-spacing:0.037px;font-weight:bold;">Input</div>
<div class="r" style="left:100.80px;top:64.60px;width:839.80px;height:239.20px;background:#fff;border:0.7px solid #c2c1b6;border-right-color:#d9d8ce;border-bottom-color:#d9d8ce;"></div>
<svg width="960" height="525" font-family="Liberation Sans, sans-serif"><defs><linearGradient id="g1" gradientUnits="userSpaceOnUse" x1="128.41" y1="262.30" x2="130.19" y2="269.90"><stop offset="0" stop-color="#cfd0da"/><stop offset="0.14" stop-color="#e2e3ec"/><stop offset="0.34" stop-color="#f3f3f9"/><stop offset="0.58" stop-color="#e7e7f0"/><stop offset="0.84" stop-color="#c9cad5"/><stop offset="1" stop-color="#aeafbc"/></linearGradient><linearGradient id="g2" gradientUnits="userSpaceOnUse" x1="238.68" y1="236.52" x2="240.32" y2="244.15"><stop offset="0" stop-color="#e8704e"/><stop offset="0.3" stop-color="#f5805c"/><stop offset="0.6" stop-color="#ee6a46"/><stop offset="1" stop-color="#d85434"/></linearGradient><linearGradient id="g3" gradientUnits="userSpaceOnUse" x1="338.22" y1="242.68" x2="339.95" y2="250.29"><stop offset="0" stop-color="#cfd0da"/><stop offset="0.14" stop-color="#e2e3ec"/><stop offset="0.34" stop-color="#f3f3f9"/><stop offset="0.58" stop-color="#e7e7f0"/><stop offset="0.84" stop-color="#c9cad5"/><stop offset="1" stop-color="#aeafbc"/></linearGradient><linearGradient id="g4" gradientUnits="userSpaceOnUse" x1="716.81" y1="157.18" x2="718.55" y2="164.78"><stop offset="0" stop-color="#cfd0da"/><stop offset="0.14" stop-color="#e2e3ec"/><stop offset="0.34" stop-color="#f3f3f9"/><stop offset="0.58" stop-color="#e7e7f0"/><stop offset="0.84" stop-color="#c9cad5"/><stop offset="1" stop-color="#aeafbc"/></linearGradient><linearGradient id="g5" gradientUnits="userSpaceOnUse" x1="298.44" y1="229.66" x2="295.25" y2="236.78"><stop offset="0" stop-color="#b4b5bb"/><stop offset="0.22" stop-color="#c6c7cc"/><stop offset="0.5" stop-color="#aeafb5"/><stop offset="0.8" stop-color="#95969d"/><stop offset="1" stop-color="#84858d"/></linearGradient><linearGradient id="g6" gradientUnits="userSpaceOnUse" x1="382.86" y1="227.93" x2="379.56" y2="235.00"><stop offset="0" stop-color="#b4b5bb"/><stop offset="0.22" stop-color="#c6c7cc"/><stop offset="0.5" stop-color="#aeafb5"/><stop offset="0.8" stop-color="#95969d"/><stop offset="1" stop-color="#84858d"/></linearGradient><linearGradient id="g7" gradientUnits="userSpaceOnUse" x1="677.44" y1="144.11" x2="674.21" y2="151.21"><stop offset="0" stop-color="#b4b5bb"/><stop offset="0.22" stop-color="#c6c7cc"/><stop offset="0.5" stop-color="#aeafb5"/><stop offset="0.8" stop-color="#95969d"/><stop offset="1" stop-color="#84858d"/></linearGradient><linearGradient id="g8" gradientUnits="userSpaceOnUse" x1="762.16" y1="142.22" x2="758.86" y2="149.29"><stop offset="0" stop-color="#b4b5bb"/><stop offset="0.22" stop-color="#c6c7cc"/><stop offset="0.5" stop-color="#aeafb5"/><stop offset="0.8" stop-color="#95969d"/><stop offset="1" stop-color="#84858d"/></linearGradient><linearGradient id="g9" gradientUnits="userSpaceOnUse" x1="355.83" y1="210.41" x2="357.55" y2="218.02"><stop offset="0" stop-color="#cfd0da"/><stop offset="0.14" stop-color="#e2e3ec"/><stop offset="0.34" stop-color="#f3f3f9"/><stop offset="0.58" stop-color="#e7e7f0"/><stop offset="0.84" stop-color="#c9cad5"/><stop offset="1" stop-color="#aeafbc"/></linearGradient><linearGradient id="g10" gradientUnits="userSpaceOnUse" x1="735.82" y1="124.98" x2="737.55" y2="132.59"><stop offset="0" stop-color="#cfd0da"/><stop offset="0.14" stop-color="#e2e3ec"/><stop offset="0.34" stop-color="#f3f3f9"/><stop offset="0.58" stop-color="#e7e7f0"/><stop offset="0.84" stop-color="#c9cad5"/><stop offset="1" stop-color="#aeafbc"/></linearGradient></defs><path d="M182.30 257.90 V264.70" stroke="#7fd07a" stroke-width="1"/><path d="M182.30 259.30 l1 1.4 l-1 1.4 l-1 -1.4 Z" fill="#b9e8b4" stroke="#46b43e" stroke-width="0.4"/><path d="M177.70 266.10 l4.6 -1 l4.5 2.6 l-4.3 1.2 Z" fill="#46b43e"/><path d="M360.00 246.20 V253.00" stroke="#7fd07a" stroke-width="1"/><path d="M360.00 247.60 l1 1.4 l-1 1.4 l-1 -1.4 Z" fill="#b9e8b4" stroke="#46b43e" stroke-width="0.4"/><path d="M355.40 254.40 l4.6 -1 l4.5 2.6 l-4.3 1.2 Z" fill="#46b43e"/><path d="M401.70 208.00 V214.80" stroke="#7fd07a" stroke-width="1"/><path d="M401.70 209.40 l1 1.4 l-1 1.4 l-1 -1.4 Z" fill="#b9e8b4" stroke="#46b43e" stroke-width="0.4"/><path d="M397.10 216.20 l4.6 -1 l4.5 2.6 l-4.3 1.2 Z" fill="#46b43e"/><path d="M455.00 196.00 V202.80" stroke="#7fd07a" stroke-width="1"/><path d="M455.00 197.40 l1 1.4 l-1 1.4 l-1 -1.4 Z" fill="#b9e8b4" stroke="#46b43e" stroke-width="0.4"/><path d="M450.40 204.20 l4.6 -1 l4.5 2.6 l-4.3 1.2 Z" fill="#46b43e"/><path d="M561.50 172.20 V179.00" stroke="#7fd07a" stroke-width="1"/><path d="M561.50 173.60 l1 1.4 l-1 1.4 l-1 -1.4 Z" fill="#b9e8b4" stroke="#46b43e" stroke-width="0.4"/><path d="M556.90 180.40 l4.6 -1 l4.5 2.6 l-4.3 1.2 Z" fill="#46b43e"/><path d="M615.00 160.20 V167.00" stroke="#7fd07a" stroke-width="1"/><path d="M615.00 161.60 l1 1.4 l-1 1.4 l-1 -1.4 Z" fill="#b9e8b4" stroke="#46b43e" stroke-width="0.4"/><path d="M610.40 168.40 l4.6 -1 l4.5 2.6 l-4.3 1.2 Z" fill="#46b43e"/><path d="M739.00 160.70 V167.50" stroke="#7fd07a" stroke-width="1"/><path d="M739.00 162.10 l1 1.4 l-1 1.4 l-1 -1.4 Z" fill="#b9e8b4" stroke="#46b43e" stroke-width="0.4"/><path d="M734.40 168.90 l4.6 -1 l4.5 2.6 l-4.3 1.2 Z" fill="#46b43e"/><path d="M780.80 122.50 V129.30" stroke="#7fd07a" stroke-width="1"/><path d="M780.80 123.90 l1 1.4 l-1 1.4 l-1 -1.4 Z" fill="#b9e8b4" stroke="#46b43e" stroke-width="0.4"/><path d="M776.20 130.70 l4.6 -1 l4.5 2.6 l-4.3 1.2 Z" fill="#46b43e"/><path d="M834.00 110.50 V117.30" stroke="#7fd07a" stroke-width="1"/><path d="M834.00 111.90 l1 1.4 l-1 1.4 l-1 -1.4 Z" fill="#b9e8b4" stroke="#46b43e" stroke-width="0.4"/><path d="M829.40 118.70 l4.6 -1 l4.5 2.6 l-4.3 1.2 Z" fill="#46b43e"/><path d="M230.40 253.80 l4.6 -1 l4.5 2.6 l-4.3 1.2 Z" fill="#46b43e"/><path d="M883.20 86.20 l9 3.9 v12.6 l-9 -4 Z" fill="#3f9a2e" stroke="#358a28" stroke-width="0.3"/><line x1="129.30" y1="266.10" x2="239.50" y2="240.33" stroke="url(#g1)" stroke-width="7.80" stroke-linecap="butt"/><line x1="239.50" y1="240.33" x2="280.59" y2="231.51" stroke="url(#g2)" stroke-width="7.80" stroke-linecap="butt"/><line x1="339.08" y1="246.49" x2="380.62" y2="237.01" stroke="url(#g3)" stroke-width="7.80" stroke-linecap="butt"/><line x1="717.68" y1="160.98" x2="759.92" y2="151.32" stroke="url(#g4)" stroke-width="7.80" stroke-linecap="butt"/><line x1="296.85" y1="233.22" x2="322.85" y2="244.88" stroke="url(#g5)" stroke-width="7.80" stroke-linecap="butt"/><line x1="381.21" y1="231.46" x2="356.09" y2="219.74" stroke="url(#g6)" stroke-width="7.80" stroke-linecap="butt"/><line x1="675.83" y1="147.66" x2="701.47" y2="159.34" stroke="url(#g7)" stroke-width="7.80" stroke-linecap="butt"/><line x1="760.51" y1="145.76" x2="736.09" y2="134.34" stroke="url(#g8)" stroke-width="7.80" stroke-linecap="butt"/><line x1="356.69" y1="214.21" x2="659.61" y2="145.99" stroke="url(#g9)" stroke-width="7.80" stroke-linecap="butt"/><line x1="736.68" y1="128.79" x2="887.40" y2="94.40" stroke="url(#g10)" stroke-width="7.80" stroke-linecap="round"/><path d="M280.30 231.57 L282.74 231.04 Q289.00 229.70 294.84 232.32 L297.12 233.34" fill="none" stroke="#766fb4" stroke-width="7.80"/><path d="M280.30 231.57 L282.74 231.04 Q289.00 229.70 294.84 232.32 L297.12 233.34" fill="none" stroke="#8c85c8" stroke-width="6.08" transform="translate(-0.1 -0.4)"/><path d="M280.30 231.57 L282.74 231.04 Q289.00 229.70 294.84 232.32 L297.12 233.34" fill="none" stroke="#a59edb" stroke-width="3.28" transform="translate(-0.2 -1.0)"/><path d="M322.58 244.76 L324.86 245.78 Q330.70 248.40 336.94 246.98 L339.38 246.42" fill="none" stroke="#766fb4" stroke-width="7.80"/><path d="M322.58 244.76 L324.86 245.78 Q330.70 248.40 336.94 246.98 L339.38 246.42" fill="none" stroke="#8c85c8" stroke-width="6.08" transform="translate(-0.1 -0.4)"/><path d="M322.58 244.76 L324.86 245.78 Q330.70 248.40 336.94 246.98 L339.38 246.42" fill="none" stroke="#a59edb" stroke-width="3.28" transform="translate(-0.2 -1.0)"/><path d="M380.32 237.08 L380.81 236.97 Q389.00 235.10 381.39 231.55 L380.94 231.34" fill="none" stroke="#766fb4" stroke-width="7.80"/><path d="M380.32 237.08 L380.81 236.97 Q389.00 235.10 381.39 231.55 L380.94 231.34" fill="none" stroke="#8c85c8" stroke-width="6.08" transform="translate(-0.1 -0.4)"/><path d="M380.32 237.08 L380.81 236.97 Q389.00 235.10 381.39 231.55 L380.94 231.34" fill="none" stroke="#a59edb" stroke-width="3.28" transform="translate(-0.2 -1.0)"/><path d="M356.36 219.86 L355.91 219.65 Q348.30 216.10 356.49 214.23 L356.98 214.12" fill="none" stroke="#766fb4" stroke-width="7.80"/><path d="M356.36 219.86 L355.91 219.65 Q348.30 216.10 356.49 214.23 L356.98 214.12" fill="none" stroke="#8c85c8" stroke-width="6.08" transform="translate(-0.1 -0.4)"/><path d="M356.36 219.86 L355.91 219.65 Q348.30 216.10 356.49 214.23 L356.98 214.12" fill="none" stroke="#a59edb" stroke-width="3.28" transform="translate(-0.2 -1.0)"/><path d="M659.32 146.07 L661.76 145.51 Q668.00 144.10 673.82 146.75 L676.10 147.79" fill="none" stroke="#766fb4" stroke-width="7.80"/><path d="M659.32 146.07 L661.76 145.51 Q668.00 144.10 673.82 146.75 L676.10 147.79" fill="none" stroke="#8c85c8" stroke-width="6.08" transform="translate(-0.1 -0.4)"/><path d="M659.32 146.07 L661.76 145.51 Q668.00 144.10 673.82 146.75 L676.10 147.79" fill="none" stroke="#a59edb" stroke-width="3.28" transform="translate(-0.2 -1.0)"/><path d="M701.20 159.21 L703.48 160.25 Q709.30 162.90 715.54 161.47 L717.98 160.91" fill="none" stroke="#766fb4" stroke-width="7.80"/><path d="M701.20 159.21 L703.48 160.25 Q709.30 162.90 715.54 161.47 L717.98 160.91" fill="none" stroke="#8c85c8" stroke-width="6.08" transform="translate(-0.1 -0.4)"/><path d="M701.20 159.21 L703.48 160.25 Q709.30 162.90 715.54 161.47 L717.98 160.91" fill="none" stroke="#a59edb" stroke-width="3.28" transform="translate(-0.2 -1.0)"/><path d="M759.62 151.39 L760.11 151.27 Q768.30 149.40 760.69 145.84 L760.24 145.63" fill="none" stroke="#766fb4" stroke-width="7.80"/><path d="M759.62 151.39 L760.11 151.27 Q768.30 149.40 760.69 145.84 L760.24 145.63" fill="none" stroke="#8c85c8" stroke-width="6.08" transform="translate(-0.1 -0.4)"/><path d="M759.62 151.39 L760.11 151.27 Q768.30 149.40 760.69 145.84 L760.24 145.63" fill="none" stroke="#a59edb" stroke-width="3.28" transform="translate(-0.2 -1.0)"/><path d="M736.36 134.47 L735.91 134.26 Q728.30 130.70 736.48 128.78 L736.97 128.67" fill="none" stroke="#766fb4" stroke-width="7.80"/><path d="M736.36 134.47 L735.91 134.26 Q728.30 130.70 736.48 128.78 L736.97 128.67" fill="none" stroke="#8c85c8" stroke-width="6.08" transform="translate(-0.1 -0.4)"/><path d="M736.36 134.47 L735.91 134.26 Q728.30 130.70 736.48 128.78 L736.97 128.67" fill="none" stroke="#a59edb" stroke-width="3.28" transform="translate(-0.2 -1.0)"/><path d="M125.10 257.90 l9 3.9 v12.6 l-9 -4 Z" fill="#3f9a2e" stroke="#358a28" stroke-width="0.3"/><path d="M503.60 171.90 l9 3.9 v12.6 l-9 -4 Z" fill="#3f9a2e" stroke="#358a28" stroke-width="0.3"/><ellipse cx="235.60" cy="241.40" rx="7.6" ry="1.9" fill="#f9d2cc" fill-opacity="0.8" stroke="#ea8a84" stroke-width="0.4" transform="rotate(-12 235.00 241.20)"/><path d="M235.00 234.00 V249.80" stroke="#e02020" stroke-width="1.1"/><circle cx="129.30" cy="266.00" r="2.3" fill="#1414e6"/><circle cx="182.30" cy="253.70" r="1.5" fill="#1414e6"/><circle cx="235.00" cy="241.20" r="1.5" fill="#1414e6"/><circle cx="289.00" cy="229.60" r="1.5" fill="#1414e6"/><circle cx="330.70" cy="248.30" r="1.5" fill="#1414e6"/><circle cx="360.00" cy="242.00" r="1.5" fill="#1414e6"/><circle cx="389.00" cy="235.00" r="1.5" fill="#1414e6"/><circle cx="348.30" cy="216.00" r="1.5" fill="#1414e6"/><circle cx="401.70" cy="203.80" r="1.5" fill="#1414e6"/><circle cx="455.00" cy="191.80" r="1.5" fill="#1414e6"/><circle cx="507.80" cy="180.00" r="1.5" fill="#1414e6"/><circle cx="561.50" cy="168.00" r="1.5" fill="#1414e6"/><circle cx="615.00" cy="156.00" r="1.5" fill="#1414e6"/><circle cx="668.00" cy="144.00" r="1.5" fill="#1414e6"/><circle cx="709.30" cy="162.80" r="1.5" fill="#1414e6"/><circle cx="739.00" cy="156.50" r="1.5" fill="#1414e6"/><circle cx="768.30" cy="149.30" r="1.5" fill="#1414e6"/><circle cx="728.30" cy="130.60" r="1.5" fill="#1414e6"/><circle cx="780.80" cy="118.30" r="1.5" fill="#1414e6"/><circle cx="834.00" cy="106.30" r="1.5" fill="#1414e6"/><circle cx="887.40" cy="94.30" r="1.5" fill="#1414e6"/><g font-size="8" font-weight="bold" fill="#2222dc" stroke="#2222dc" stroke-width="0.42"><text x="132.10" y="259.80">1</text><text x="184.50" y="247.50">2</text><text x="237.20" y="235.00">3</text><text x="291.20" y="223.40">4</text><text x="332.90" y="242.10">5</text><text x="362.20" y="235.80">6</text><text x="391.20" y="228.80">7</text><text x="350.50" y="209.80">8</text><text x="403.90" y="197.60">9</text><text x="457.20" y="185.60">10</text><text x="510.60" y="173.80">11</text><text x="563.70" y="161.80">12</text><text x="617.20" y="149.80">13</text><text x="670.20" y="137.80">14</text><text x="711.50" y="156.60">15</text><text x="741.20" y="150.30">16</text><text x="770.50" y="143.10">17</text><text x="730.50" y="124.40">18</text><text x="783.00" y="112.10">19</text><text x="836.20" y="100.10">20</text><text x="890.20" y="88.10">21</text></g><path d="M909.5 272.9 V255.4 M909.5 272.9 L894 276.6 M909.5 272.9 L919.4 277.5" stroke="#2c2cc0" stroke-width="0.9" fill="none"/><g font-size="4.6" font-weight="bold" fill="#e02020"><text x="902.6" y="253.8">z</text><text x="891.2" y="281.6">x</text><text x="917.2" y="283.2">y</text></g></svg>
<div class="r" style="left:0.00px;top:304.20px;width:941.00px;height:15.20px;background:#fafaf7;"></div>
<div class="t" style="left:1.40px;top:309.12px;font-size:5.80px;line-height:6.96px;height:6.96px;color:#1c1c1c;letter-spacing:0.003px;">Load on Restraints and Equipment</div>
<svg width="960" height="330"><path d="M913.4 312 H916.4 L914.9 313.8 Z" fill="#333"/><path d="M923.6 310.6 H926.2 M924.1 310.6 V313 M925.7 310.6 V313 M923.2 313.1 H926.6 M924.9 313.1 V314.8" stroke="#444" stroke-width="0.6" fill="none"/><path d="M933.6 311 L936.6 314.2 M936.6 311 L933.6 314.2" stroke="#8a8a90" stroke-width="0.6"/></svg>
<div class="r" style="left:0.60px;top:319.20px;width:939.40px;height:22.40px;background:#f5f7fd;border:0.6px solid #d2d4da;"></div>
<div class="t" style="left:2.20px;top:320.10px;font-size:5.50px;line-height:6.60px;height:6.60px;color:#1c1c1c;letter-spacing:-0.203px;">Operating Mode</div>
<div class="t" style="left:91.20px;top:320.10px;font-size:5.50px;line-height:6.60px;height:6.60px;color:#1c1c1c;letter-spacing:-0.278px;">Submode</div>
<div class="t" style="left:255.00px;top:320.10px;font-size:5.50px;line-height:6.60px;height:6.60px;color:#1c1c1c;letter-spacing:-0.198px;">Axis</div>
<div class="t" style="left:338.00px;top:320.10px;font-size:5.50px;line-height:6.60px;height:6.60px;color:#1c1c1c;letter-spacing:-0.101px;">Support Type</div>
<div class="t" style="left:412.00px;top:320.10px;font-size:5.50px;line-height:6.60px;height:6.60px;color:#1c1c1c;letter-spacing:-0.072px;">Anchor Factor</div>
<div class="r" style="left:1.80px;top:327.20px;width:86.40px;height:9.20px;background:#fff;border:0.4px solid #dfe4ee;"></div>
<div class="t" style="left:4.00px;top:328.66px;font-size:5.40px;line-height:6.48px;height:6.48px;color:#1c1c1c;letter-spacing:-0.071px;">1 'Operation mode'</div>
<div class="r" style="left:90.40px;top:327.20px;width:73.20px;height:9.20px;background:#fff;border:0.4px solid #dfe4ee;"></div>
<div class="t" style="left:92.60px;top:328.66px;font-size:5.40px;line-height:6.48px;height:6.48px;color:#1c1c1c;letter-spacing:-0.079px;">Operation</div>
<div class="r" style="left:255.00px;top:327.20px;width:78.60px;height:9.20px;background:#fff;border:0.4px solid #dfe4ee;"></div>
<div class="t" style="left:257.20px;top:328.66px;font-size:5.40px;line-height:6.48px;height:6.48px;color:#1c1c1c;letter-spacing:-0.057px;">Support local axis</div>
<div class="r" style="left:338.00px;top:327.20px;width:70.60px;height:9.20px;background:#fff;border:0.4px solid #dfe4ee;"></div>
<div class="t" style="left:340.20px;top:328.66px;font-size:5.40px;line-height:6.48px;height:6.48px;color:#1c1c1c;letter-spacing:-0.030px;">Anchor (fixed), Sliding ...</div>
<div class="r" style="left:411.60px;top:327.20px;width:33.60px;height:9.20px;background:#fff;border:0.4px solid #dfe4ee;"></div>
<div class="t" style="left:413.80px;top:328.66px;font-size:5.40px;line-height:6.48px;height:6.48px;color:#1c1c1c;letter-spacing:-0.035px;">0.8</div>
<div class="r" style="left:447.40px;top:326.80px;width:13.00px;height:10.20px;background:linear-gradient(#ecebdc,#dcdbc8);border:0.5px solid #b6b5a4;border-radius:1px;"></div>
<div class="t" style="left:452.60px;top:328.66px;font-size:5.40px;line-height:6.48px;height:6.48px;color:#333;font-weight:bold;">?</div>
<svg width="960" height="345"><path d="M83.80 331.2 h2.6 l-1.3 1.6 Z" fill="#222"/><path d="M159.20 331.2 h2.6 l-1.3 1.6 Z" fill="#222"/><path d="M329.20 331.2 h2.6 l-1.3 1.6 Z" fill="#222"/><path d="M404.20 331.2 h2.6 l-1.3 1.6 Z" fill="#222"/></svg>
<div class="r" style="left:0.00px;top:340.60px;width:940.40px;height:162.60px;background:#e3e5ea;"></div>
<div class="r" style="left:0.60px;top:341.20px;width:938.20px;height:159.90px;background:#a0a1a0;"></div>
<div class="r" style="left:2.00px;top:341.80px;width:271.60px;height:157.30px;background:#fff;"></div>
<div class="r" style="left:2.00px;top:341.80px;width:271.60px;height:20.40px;background:#f3f3f3;"></div>
<div class="r" style="left:2.00px;top:383.00px;width:271.60px;height:10.50px;background:#0b78d7;"></div>
<div class="r" style="left:2.00px;top:361.90px;width:271.60px;height:0.60px;background:#d9d9d9;"></div>
<div class="r" style="left:2.00px;top:372.40px;width:271.60px;height:0.60px;background:#d9d9d9;"></div>
<div class="r" style="left:2.00px;top:382.90px;width:271.60px;height:0.60px;background:#5aa2e6;"></div>
<div class="r" style="left:2.00px;top:393.40px;width:271.60px;height:0.60px;background:#5aa2e6;"></div>
<div class="r" style="left:2.00px;top:403.90px;width:271.60px;height:0.60px;background:#d9d9d9;"></div>
<div class="r" style="left:2.00px;top:414.40px;width:271.60px;height:0.60px;background:#d9d9d9;"></div>
<div class="r" style="left:2.00px;top:424.90px;width:271.60px;height:0.60px;background:#d9d9d9;"></div>
<div class="r" style="left:2.00px;top:435.40px;width:271.60px;height:0.60px;background:#d9d9d9;"></div>
<div class="r" style="left:2.00px;top:445.90px;width:271.60px;height:0.60px;background:#d9d9d9;"></div>
<div class="r" style="left:2.00px;top:456.40px;width:271.60px;height:0.60px;background:#d9d9d9;"></div>
<div class="r" style="left:2.00px;top:466.90px;width:271.60px;height:0.60px;background:#d9d9d9;"></div>
<div class="r" style="left:2.00px;top:477.40px;width:271.60px;height:0.60px;background:#d9d9d9;"></div>
<div class="r" style="left:2.00px;top:487.90px;width:271.60px;height:0.60px;background:#d9d9d9;"></div>
<div class="r" style="left:2.00px;top:498.40px;width:271.60px;height:0.60px;background:#d9d9d9;"></div>
<div class="r" style="left:2.00px;top:341.80px;width:271.60px;height:0.60px;background:#c4c4c4;"></div>
<div class="r" style="left:92.30px;top:351.70px;width:181.30px;height:0.60px;background:#cfcfcf;"></div>
<div class="r" style="left:1.70px;top:341.80px;width:0.60px;height:156.90px;background:#cfcfcf;"></div>
<div class="r" style="left:45.40px;top:341.80px;width:0.60px;height:156.90px;background:#d9d9d9;"></div>
<div class="r" style="left:92.00px;top:341.80px;width:0.60px;height:156.90px;background:#d9d9d9;"></div>
<div class="r" style="left:118.40px;top:352.00px;width:0.60px;height:146.70px;background:#d9d9d9;"></div>
<div class="r" style="left:145.40px;top:352.00px;width:0.60px;height:146.70px;background:#d9d9d9;"></div>
<div class="r" style="left:171.40px;top:341.80px;width:0.60px;height:156.90px;background:#d9d9d9;"></div>
<div class="r" style="left:205.40px;top:352.00px;width:0.60px;height:146.70px;background:#d9d9d9;"></div>
<div class="r" style="left:239.10px;top:352.00px;width:0.60px;height:146.70px;background:#d9d9d9;"></div>
<div class="r" style="left:273.30px;top:341.80px;width:0.60px;height:156.90px;background:#cfcfcf;"></div>
<div class="r" style="left:45.40px;top:383.20px;width:0.60px;height:10.20px;background:#5aa2e6;"></div>
<div class="r" style="left:92.00px;top:383.20px;width:0.60px;height:10.20px;background:#5aa2e6;"></div>
<div class="r" style="left:118.40px;top:383.20px;width:0.60px;height:10.20px;background:#5aa2e6;"></div>
<div class="r" style="left:145.40px;top:383.20px;width:0.60px;height:10.20px;background:#5aa2e6;"></div>
<div class="r" style="left:171.40px;top:383.20px;width:0.60px;height:10.20px;background:#5aa2e6;"></div>
<div class="r" style="left:205.40px;top:383.20px;width:0.60px;height:10.20px;background:#5aa2e6;"></div>
<div class="r" style="left:239.10px;top:383.20px;width:0.60px;height:10.20px;background:#5aa2e6;"></div>
<div class="t" style="left:5.25px;top:343.06px;font-size:5.90px;line-height:7.08px;height:7.08px;color:#2b2b2b;letter-spacing:0.043px;">Node Number</div>
<div class="t" style="left:62.70px;top:343.06px;font-size:5.90px;line-height:7.08px;height:7.08px;color:#2b2b2b;letter-spacing:-0.048px;">Type</div>
<div class="t" style="left:94.70px;top:343.06px;font-size:5.90px;line-height:7.08px;height:7.08px;color:#2b2b2b;letter-spacing:-0.016px;">Forces along local axis, (kgf)</div>
<div class="t" style="left:174.15px;top:343.06px;font-size:5.90px;line-height:7.08px;height:7.08px;color:#2b2b2b;letter-spacing:0.055px;">Moments around local axis, (kgf-cm)</div>
<div class="t" style="left:98.62px;top:353.66px;font-size:5.90px;line-height:7.08px;height:7.08px;color:#2b2b2b;letter-spacing:0.000px;">Xmm</div>
<div class="t" style="left:125.32px;top:353.66px;font-size:5.90px;line-height:7.08px;height:7.08px;color:#2b2b2b;letter-spacing:0.000px;">Ymm</div>
<div class="t" style="left:151.98px;top:353.66px;font-size:5.90px;line-height:7.08px;height:7.08px;color:#2b2b2b;letter-spacing:0.000px;">Zmm</div>
<div class="t" style="left:181.82px;top:353.66px;font-size:5.90px;line-height:7.08px;height:7.08px;color:#2b2b2b;letter-spacing:0.000px;">Xmm</div>
<div class="t" style="left:215.67px;top:353.66px;font-size:5.90px;line-height:7.08px;height:7.08px;color:#2b2b2b;letter-spacing:0.000px;">Ymm</div>
<div class="t" style="left:249.78px;top:353.66px;font-size:5.90px;line-height:7.08px;height:7.08px;color:#2b2b2b;letter-spacing:0.000px;">Zmm</div>
<div class="t" style="left:22.21px;top:363.91px;font-size:5.90px;line-height:7.08px;height:7.08px;color:#2b2b2b;">1</div>
<div class="t" style="left:47.30px;top:363.91px;font-size:5.90px;line-height:7.08px;height:7.08px;color:#2b2b2b;letter-spacing:0.070px;">Anchor (fixed)</div>
<div class="t" style="left:96.48px;top:363.91px;font-size:5.90px;line-height:7.08px;height:7.08px;color:#2b2b2b;letter-spacing:0.000px;">600.50</div>
<div class="t" style="left:124.82px;top:363.91px;font-size:5.90px;line-height:7.08px;height:7.08px;color:#2b2b2b;letter-spacing:0.000px;">71.20</div>
<div class="t" style="left:151.32px;top:363.91px;font-size:5.90px;line-height:7.08px;height:7.08px;color:#2b2b2b;letter-spacing:0.000px;">76.70</div>
<div class="t" style="left:179.68px;top:363.91px;font-size:5.90px;line-height:7.08px;height:7.08px;color:#2b2b2b;letter-spacing:0.000px;">703.24</div>
<div class="t" style="left:211.89px;top:363.91px;font-size:5.90px;line-height:7.08px;height:7.08px;color:#2b2b2b;letter-spacing:0.000px;">2233.75</div>
<div class="t" style="left:245.84px;top:363.91px;font-size:5.90px;line-height:7.08px;height:7.08px;color:#2b2b2b;letter-spacing:0.000px;">9319.16</div>
<div class="t" style="left:22.21px;top:374.41px;font-size:5.90px;line-height:7.08px;height:7.08px;color:#2b2b2b;">2</div>
<div class="t" style="left:47.30px;top:374.41px;font-size:5.90px;line-height:7.08px;height:7.08px;color:#2b2b2b;letter-spacing:0.066px;">Sliding Support</div>
<div class="t" style="left:99.76px;top:374.41px;font-size:5.90px;line-height:7.08px;height:7.08px;color:#2b2b2b;letter-spacing:0.000px;">0.10</div>
<div class="t" style="left:130.56px;top:374.41px;font-size:5.90px;line-height:7.08px;height:7.08px;color:#2b2b2b;">0</div>
<div class="t" style="left:157.06px;top:374.41px;font-size:5.90px;line-height:7.08px;height:7.08px;color:#2b2b2b;">0</div>
<div class="t" style="left:187.06px;top:374.41px;font-size:5.90px;line-height:7.08px;height:7.08px;color:#2b2b2b;">0</div>
<div class="t" style="left:220.91px;top:374.41px;font-size:5.90px;line-height:7.08px;height:7.08px;color:#2b2b2b;">0</div>
<div class="t" style="left:254.86px;top:374.41px;font-size:5.90px;line-height:7.08px;height:7.08px;color:#2b2b2b;">0</div>
<div class="t" style="left:22.21px;top:384.91px;font-size:5.90px;line-height:7.08px;height:7.08px;color:#e8f2ff;">3</div>
<div class="t" style="left:47.30px;top:384.91px;font-size:5.90px;line-height:7.08px;height:7.08px;color:#e8f2ff;letter-spacing:0.066px;">Sliding Support</div>
<div class="t" style="left:98.12px;top:384.91px;font-size:5.90px;line-height:7.08px;height:7.08px;color:#e8f2ff;letter-spacing:0.000px;">92.50</div>
<div class="t" style="left:124.82px;top:384.91px;font-size:5.90px;line-height:7.08px;height:7.08px;color:#e8f2ff;letter-spacing:0.000px;">33.70</div>
<div class="t" style="left:149.68px;top:384.91px;font-size:5.90px;line-height:7.08px;height:7.08px;color:#e8f2ff;letter-spacing:0.000px;">328.40</div>
<div class="t" style="left:187.06px;top:384.91px;font-size:5.90px;line-height:7.08px;height:7.08px;color:#e8f2ff;">0</div>
<div class="t" style="left:220.91px;top:384.91px;font-size:5.90px;line-height:7.08px;height:7.08px;color:#e8f2ff;">0</div>
<div class="t" style="left:254.86px;top:384.91px;font-size:5.90px;line-height:7.08px;height:7.08px;color:#e8f2ff;">0</div>
<div class="t" style="left:22.21px;top:395.41px;font-size:5.90px;line-height:7.08px;height:7.08px;color:#2b2b2b;">6</div>
<div class="t" style="left:47.30px;top:395.41px;font-size:5.90px;line-height:7.08px;height:7.08px;color:#2b2b2b;letter-spacing:0.066px;">Sliding Support</div>
<div class="t" style="left:103.86px;top:395.41px;font-size:5.90px;line-height:7.08px;height:7.08px;color:#2b2b2b;">0</div>
<div class="t" style="left:124.82px;top:395.41px;font-size:5.90px;line-height:7.08px;height:7.08px;color:#2b2b2b;letter-spacing:0.000px;">75.10</div>
<div class="t" style="left:149.68px;top:395.41px;font-size:5.90px;line-height:7.08px;height:7.08px;color:#2b2b2b;letter-spacing:0.000px;">250.80</div>
<div class="t" style="left:187.06px;top:395.41px;font-size:5.90px;line-height:7.08px;height:7.08px;color:#2b2b2b;">0</div>
<div class="t" style="left:220.91px;top:395.41px;font-size:5.90px;line-height:7.08px;height:7.08px;color:#2b2b2b;">0</div>
<div class="t" style="left:254.86px;top:395.41px;font-size:5.90px;line-height:7.08px;height:7.08px;color:#2b2b2b;">0</div>
<div class="t" style="left:22.21px;top:405.91px;font-size:5.90px;line-height:7.08px;height:7.08px;color:#2b2b2b;">9</div>
<div class="t" style="left:47.30px;top:405.91px;font-size:5.90px;line-height:7.08px;height:7.08px;color:#2b2b2b;letter-spacing:0.066px;">Sliding Support</div>
<div class="t" style="left:98.12px;top:405.91px;font-size:5.90px;line-height:7.08px;height:7.08px;color:#2b2b2b;letter-spacing:0.000px;">92.50</div>
<div class="t" style="left:124.82px;top:405.91px;font-size:5.90px;line-height:7.08px;height:7.08px;color:#2b2b2b;letter-spacing:0.000px;">33.70</div>
<div class="t" style="left:149.68px;top:405.91px;font-size:5.90px;line-height:7.08px;height:7.08px;color:#2b2b2b;letter-spacing:0.000px;">328.40</div>
<div class="t" style="left:187.06px;top:405.91px;font-size:5.90px;line-height:7.08px;height:7.08px;color:#2b2b2b;">0</div>
<div class="t" style="left:220.91px;top:405.91px;font-size:5.90px;line-height:7.08px;height:7.08px;color:#2b2b2b;">0</div>
<div class="t" style="left:254.86px;top:405.91px;font-size:5.90px;line-height:7.08px;height:7.08px;color:#2b2b2b;">0</div>
<div class="t" style="left:20.57px;top:416.41px;font-size:5.90px;line-height:7.08px;height:7.08px;color:#2b2b2b;letter-spacing:0.000px;">10</div>
<div class="t" style="left:47.30px;top:416.41px;font-size:5.90px;line-height:7.08px;height:7.08px;color:#2b2b2b;letter-spacing:0.066px;">Sliding Support</div>
<div class="t" style="left:99.76px;top:416.41px;font-size:5.90px;line-height:7.08px;height:7.08px;color:#2b2b2b;letter-spacing:0.000px;">0.10</div>
<div class="t" style="left:130.56px;top:416.41px;font-size:5.90px;line-height:7.08px;height:7.08px;color:#2b2b2b;">0</div>
<div class="t" style="left:157.06px;top:416.41px;font-size:5.90px;line-height:7.08px;height:7.08px;color:#2b2b2b;">0</div>
<div class="t" style="left:187.06px;top:416.41px;font-size:5.90px;line-height:7.08px;height:7.08px;color:#2b2b2b;">0</div>
<div class="t" style="left:220.91px;top:416.41px;font-size:5.90px;line-height:7.08px;height:7.08px;color:#2b2b2b;">0</div>
<div class="t" style="left:254.86px;top:416.41px;font-size:5.90px;line-height:7.08px;height:7.08px;color:#2b2b2b;">0</div>
<div class="t" style="left:20.79px;top:426.91px;font-size:5.90px;line-height:7.08px;height:7.08px;color:#2b2b2b;letter-spacing:0.000px;">11</div>
<div class="t" style="left:47.30px;top:426.91px;font-size:5.90px;line-height:7.08px;height:7.08px;color:#2b2b2b;letter-spacing:0.070px;">Anchor (fixed)</div>
<div class="t" style="left:96.48px;top:426.91px;font-size:5.90px;line-height:7.08px;height:7.08px;color:#2b2b2b;letter-spacing:0.000px;">120.10</div>
<div class="t" style="left:123.18px;top:426.91px;font-size:5.90px;line-height:7.08px;height:7.08px;color:#2b2b2b;letter-spacing:0.000px;">142.40</div>
<div class="t" style="left:149.68px;top:426.91px;font-size:5.90px;line-height:7.08px;height:7.08px;color:#2b2b2b;letter-spacing:0.000px;">153.40</div>
<div class="t" style="left:178.04px;top:426.91px;font-size:5.90px;line-height:7.08px;height:7.08px;color:#2b2b2b;letter-spacing:0.000px;">1406.23</div>
<div class="t" style="left:216.81px;top:426.91px;font-size:5.90px;line-height:7.08px;height:7.08px;color:#2b2b2b;letter-spacing:0.000px;">0.24</div>
<div class="t" style="left:245.84px;top:426.91px;font-size:5.90px;line-height:7.08px;height:7.08px;color:#2b2b2b;letter-spacing:0.000px;">1863.86</div>
<div class="t" style="left:20.57px;top:437.41px;font-size:5.90px;line-height:7.08px;height:7.08px;color:#2b2b2b;letter-spacing:0.000px;">12</div>
<div class="t" style="left:47.30px;top:437.41px;font-size:5.90px;line-height:7.08px;height:7.08px;color:#2b2b2b;letter-spacing:0.066px;">Sliding Support</div>
<div class="t" style="left:99.76px;top:437.41px;font-size:5.90px;line-height:7.08px;height:7.08px;color:#2b2b2b;letter-spacing:0.000px;">0.10</div>
<div class="t" style="left:130.56px;top:437.41px;font-size:5.90px;line-height:7.08px;height:7.08px;color:#2b2b2b;">0</div>
<div class="t" style="left:157.06px;top:437.41px;font-size:5.90px;line-height:7.08px;height:7.08px;color:#2b2b2b;">0</div>
<div class="t" style="left:187.06px;top:437.41px;font-size:5.90px;line-height:7.08px;height:7.08px;color:#2b2b2b;">0</div>
<div class="t" style="left:220.91px;top:437.41px;font-size:5.90px;line-height:7.08px;height:7.08px;color:#2b2b2b;">0</div>
<div class="t" style="left:254.86px;top:437.41px;font-size:5.90px;line-height:7.08px;height:7.08px;color:#2b2b2b;">0</div>
<div class="t" style="left:20.57px;top:447.91px;font-size:5.90px;line-height:7.08px;height:7.08px;color:#2b2b2b;letter-spacing:0.000px;">13</div>
<div class="t" style="left:47.30px;top:447.91px;font-size:5.90px;line-height:7.08px;height:7.08px;color:#2b2b2b;letter-spacing:0.066px;">Sliding Support</div>
<div class="t" style="left:98.12px;top:447.91px;font-size:5.90px;line-height:7.08px;height:7.08px;color:#2b2b2b;letter-spacing:0.000px;">92.50</div>
<div class="t" style="left:124.82px;top:447.91px;font-size:5.90px;line-height:7.08px;height:7.08px;color:#2b2b2b;letter-spacing:0.000px;">33.70</div>
<div class="t" style="left:149.68px;top:447.91px;font-size:5.90px;line-height:7.08px;height:7.08px;color:#2b2b2b;letter-spacing:0.000px;">328.40</div>
<div class="t" style="left:187.06px;top:447.91px;font-size:5.90px;line-height:7.08px;height:7.08px;color:#2b2b2b;">0</div>
<div class="t" style="left:220.91px;top:447.91px;font-size:5.90px;line-height:7.08px;height:7.08px;color:#2b2b2b;">0</div>
<div class="t" style="left:254.86px;top:447.91px;font-size:5.90px;line-height:7.08px;height:7.08px;color:#2b2b2b;">0</div>
<div class="t" style="left:20.57px;top:458.41px;font-size:5.90px;line-height:7.08px;height:7.08px;color:#2b2b2b;letter-spacing:0.000px;">16</div>
<div class="t" style="left:47.30px;top:458.41px;font-size:5.90px;line-height:7.08px;height:7.08px;color:#2b2b2b;letter-spacing:0.066px;">Sliding Support</div>
<div class="t" style="left:103.86px;top:458.41px;font-size:5.90px;line-height:7.08px;height:7.08px;color:#2b2b2b;">0</div>
<div class="t" style="left:124.82px;top:458.41px;font-size:5.90px;line-height:7.08px;height:7.08px;color:#2b2b2b;letter-spacing:0.000px;">75.10</div>
<div class="t" style="left:149.68px;top:458.41px;font-size:5.90px;line-height:7.08px;height:7.08px;color:#2b2b2b;letter-spacing:0.000px;">250.80</div>
<div class="t" style="left:187.06px;top:458.41px;font-size:5.90px;line-height:7.08px;height:7.08px;color:#2b2b2b;">0</div>
<div class="t" style="left:220.91px;top:458.41px;font-size:5.90px;line-height:7.08px;height:7.08px;color:#2b2b2b;">0</div>
<div class="t" style="left:254.86px;top:458.41px;font-size:5.90px;line-height:7.08px;height:7.08px;color:#2b2b2b;">0</div>
<div class="t" style="left:20.57px;top:468.91px;font-size:5.90px;line-height:7.08px;height:7.08px;color:#2b2b2b;letter-spacing:0.000px;">19</div>
<div class="t" style="left:47.30px;top:468.91px;font-size:5.90px;line-height:7.08px;height:7.08px;color:#2b2b2b;letter-spacing:0.066px;">Sliding Support</div>
<div class="t" style="left:98.12px;top:468.91px;font-size:5.90px;line-height:7.08px;height:7.08px;color:#2b2b2b;letter-spacing:0.000px;">92.50</div>
<div class="t" style="left:124.82px;top:468.91px;font-size:5.90px;line-height:7.08px;height:7.08px;color:#2b2b2b;letter-spacing:0.000px;">33.70</div>
<div class="t" style="left:149.68px;top:468.91px;font-size:5.90px;line-height:7.08px;height:7.08px;color:#2b2b2b;letter-spacing:0.000px;">328.40</div>
<div class="t" style="left:187.06px;top:468.91px;font-size:5.90px;line-height:7.08px;height:7.08px;color:#2b2b2b;">0</div>
<div class="t" style="left:220.91px;top:468.91px;font-size:5.90px;line-height:7.08px;height:7.08px;color:#2b2b2b;">0</div>
<div class="t" style="left:254.86px;top:468.91px;font-size:5.90px;line-height:7.08px;height:7.08px;color:#2b2b2b;">0</div>
<div class="t" style="left:20.57px;top:479.41px;font-size:5.90px;line-height:7.08px;height:7.08px;color:#2b2b2b;letter-spacing:0.000px;">20</div>
<div class="t" style="left:47.30px;top:479.41px;font-size:5.90px;line-height:7.08px;height:7.08px;color:#2b2b2b;letter-spacing:0.066px;">Sliding Support</div>
<div class="t" style="left:99.76px;top:479.41px;font-size:5.90px;line-height:7.08px;height:7.08px;color:#2b2b2b;letter-spacing:0.000px;">0.10</div>
<div class="t" style="left:130.56px;top:479.41px;font-size:5.90px;line-height:7.08px;height:7.08px;color:#2b2b2b;">0</div>
<div class="t" style="left:157.06px;top:479.41px;font-size:5.90px;line-height:7.08px;height:7.08px;color:#2b2b2b;">0</div>
<div class="t" style="left:187.06px;top:479.41px;font-size:5.90px;line-height:7.08px;height:7.08px;color:#2b2b2b;">0</div>
<div class="t" style="left:220.91px;top:479.41px;font-size:5.90px;line-height:7.08px;height:7.08px;color:#2b2b2b;">0</div>
<div class="t" style="left:254.86px;top:479.41px;font-size:5.90px;line-height:7.08px;height:7.08px;color:#2b2b2b;">0</div>
<div class="t" style="left:20.57px;top:489.91px;font-size:5.90px;line-height:7.08px;height:7.08px;color:#2b2b2b;letter-spacing:0.000px;">21</div>
<div class="t" style="left:47.30px;top:489.91px;font-size:5.90px;line-height:7.08px;height:7.08px;color:#2b2b2b;letter-spacing:0.070px;">Anchor (fixed)</div>
<div class="t" style="left:96.48px;top:489.91px;font-size:5.90px;line-height:7.08px;height:7.08px;color:#2b2b2b;letter-spacing:0.000px;">600.50</div>
<div class="t" style="left:124.82px;top:489.91px;font-size:5.90px;line-height:7.08px;height:7.08px;color:#2b2b2b;letter-spacing:0.000px;">71.20</div>
<div class="t" style="left:151.32px;top:489.91px;font-size:5.90px;line-height:7.08px;height:7.08px;color:#2b2b2b;letter-spacing:0.000px;">76.70</div>
<div class="t" style="left:179.68px;top:489.91px;font-size:5.90px;line-height:7.08px;height:7.08px;color:#2b2b2b;letter-spacing:0.000px;">703.24</div>
<div class="t" style="left:211.89px;top:489.91px;font-size:5.90px;line-height:7.08px;height:7.08px;color:#2b2b2b;letter-spacing:0.000px;">2233.74</div>
<div class="t" style="left:245.84px;top:489.91px;font-size:5.90px;line-height:7.08px;height:7.08px;color:#2b2b2b;letter-spacing:0.000px;">9319.07</div>
<div class="r" style="left:92.20px;top:424.00px;width:25.40px;height:12.00px;background:transparent;border:1.2px solid #e4504e;"></div>
<div class="r" style="left:120.40px;top:424.00px;width:25.60px;height:12.00px;background:transparent;border:1.2px solid #e4504e;"></div>
<div class="r" style="left:237.20px;top:425.80px;width:36.40px;height:8.40px;background:transparent;border:1.2px solid #e4504e;"></div>
<svg width="960" height="525"><g transform="translate(0 1)"><rect x="2.6" y="506.8" width="6" height="6" fill="#e4ecfa" stroke="#8fa3cc" stroke-width="0.6"/><path d="M3 508.4 H8.4" stroke="#8fa3cc" stroke-width="0.6"/><path d="M39.6 513.4 L40.4 507.2 H43.6 L44.4 513.4 Z" fill="#f4f0e0" stroke="#b8b4a0" stroke-width="0.4"/><circle cx="43.4" cy="511.8" r="1.9" fill="#e2503c"/><path d="M42.6 511 L44.2 512.6 M44.2 511 L42.6 512.6" stroke="#fff" stroke-width="0.5"/><circle cx="40.6" cy="508.4" r="1.1" fill="#f0c840"/></g></svg>
<div class="t" style="left:11.00px;top:507.82px;font-size:5.80px;line-height:6.96px;height:6.96px;color:#141414;letter-spacing:-0.021px;">Pipes list</div>
<div class="t" style="left:47.00px;top:507.82px;font-size:5.80px;line-height:6.96px;height:6.96px;color:#141414;letter-spacing:-0.028px;">Error and warning messages</div>
<div class="r" style="left:0.00px;top:516.00px;width:960.00px;height:9.00px;background:linear-gradient(#f3f6fc,#e3e8f5);"></div>
<div class="t" style="left:1.40px;top:517.02px;font-size:5.80px;line-height:6.96px;height:6.96px;color:#101010;letter-spacing:-0.066px;">Press F1 for Help</div>
<div class="r" style="left:909.60px;top:516.60px;width:14.60px;height:7.40px;background:transparent;border:0.5px solid #c4ccdc;"></div>
<div class="r" style="left:924.60px;top:516.60px;width:18.40px;height:7.40px;background:transparent;border:0.5px solid #c4ccdc;"></div>
<div class="r" style="left:943.40px;top:516.60px;width:16.00px;height:7.40px;background:transparent;border:0.5px solid #c4ccdc;"></div>
<div class="t" style="left:927.00px;top:517.12px;font-size:5.30px;line-height:6.36px;height:6.36px;color:#1c1c1c;letter-spacing:0.243px;">NUM</div>
<div class="r" style="left:0.00px;top:524.00px;width:960.00px;height:1.00px;background:#6f7f98;"></div>
<div class="r" style="left:941.00px;top:50.50px;width:19.00px;height:465.50px;background:#f4f7fd;"></div>
<div class="r" style="left:942.00px;top:51.40px;width:16.40px;height:264.40px;background:linear-gradient(90deg,#eef1f9,#e2e7f3 55%,#d3daea);border-radius:0 0 2px 2px;"></div>
<div class="r" style="left:942.00px;top:316.60px;width:16.40px;height:31.60px;background:linear-gradient(90deg,#eef1f9,#e2e7f3 55%,#d3daea);border-radius:0 0 2px 2px;"></div>
<div class="r" style="left:944.00px;top:53.20px;width:9.00px;height:1.00px;background:repeating-linear-gradient(90deg,#ccd4e6 0,#ccd4e6 1px,transparent 1px,transparent 2px);"></div>
<div class="r" style="left:943.40px;top:156.60px;width:13.00px;height:0.60px;background:#c9d2e4;"></div>
<div class="r" style="left:943.40px;top:269.60px;width:13.00px;height:0.60px;background:#c9d2e4;"></div>
<svg width="960" height="360"><g transform="translate(947.60 61.60)"><rect x="-3.6" y="-2" width="7.2" height="4" rx="1.2" fill="#2a7ad8" stroke="#1a4ea8" stroke-width="0.6"/><path d="M-2 0 H2" stroke="#9fd0ff" stroke-width="0.7"/></g><g transform="translate(955.40 61.20)"><path d="M-1.3 -0.6 H1.3 L0 0.9 Z" fill="#222"/></g><g transform="translate(949.20 72.60)"><path d="M-2.6 2.6 L1.6 -2.6 L3 -1.4 L-1.2 3.2 Z" fill="#c5c9d6"/></g><g transform="translate(947.60 84.00)"><path d="M-3.8 2.2 H3.8 L3 0 L1.4 -0.4 L0.6 -2.4 H-1 L-1.8 -0.4 L-3.2 0.2 Z" fill="#2a78d0" stroke="#1a4ea8" stroke-width="0.4"/></g><g transform="translate(955.40 83.60)"><path d="M-1.3 -0.6 H1.3 L0 0.9 Z" fill="#222"/></g><g transform="translate(949.20 94.80)"><path d="M-2.4 -2.6 H2 L1 2.8 H-2.4 Z" fill="#c5c9d6"/></g><g transform="translate(949.20 105.40)"><rect x="-2.8" y="-2.4" width="5.6" height="4.8" fill="#c5c9d6"/></g><g transform="translate(949.20 116.60)"><path d="M0 -2.4 V2.4" stroke="#c5c9d6" stroke-width="1.2"/></g><g transform="translate(949.20 128.00)"><path d="M-3.4 -2.6 L0 0 L-3.4 2.6 Z M3.4 -2.6 L0 0 L3.4 2.6 Z" fill="#1e62b8" stroke="#1e62b8" stroke-width="0.8"/></g><g transform="translate(949.20 139.00)"><path d="M-3.2 0 H3.2 M0 -2.6 V2.6" stroke="#c5c9d6" stroke-width="1.6"/></g><g transform="translate(949.20 149.60)"><rect x="-3" y="-1.8" width="6" height="3.8" fill="#c5c9d6"/></g><g transform="translate(949.20 163.40)"><path d="M-2.8 -2.8 L2.8 2.8 M2.8 -2.8 L-2.8 2.8" stroke="#c5c9d6" stroke-width="0.8"/></g><g transform="translate(949.20 174.40)"><path d="M-3 -2.6 H3 M0 -2.6 V1 M-3 2.6 L0 0.2 L3 2.6" stroke="#c5c9d6" stroke-width="0.8" fill="none"/></g><g transform="translate(949.20 185.60)"><path d="M-3 -1 H3 M-2.2 1.4 H2.2" stroke="#c5c9d6" stroke-width="1"/></g><g transform="translate(949.20 197.00)"><path d="M-3 -1 H3 M-2.2 1.4 H2.2" stroke="#c5c9d6" stroke-width="1"/></g><g transform="translate(949.20 208.00)"><path d="M-3 -1 H3 M-2.2 1.4 H2.2" stroke="#c5c9d6" stroke-width="1"/></g><g transform="translate(947.60 219.00)"><path d="M-3 0 H2 M0 -2.4 V2.4" stroke="#c5c9d6" stroke-width="1"/></g><g transform="translate(955.40 219.00)"><path d="M-1 -0.5 H1 L0 0.7 Z" fill="#b0b4c0"/></g><g transform="translate(949.20 230.00)"><path d="M-3 1.6 H3 M-2 -1 H2" stroke="#c5c9d6" stroke-width="1"/></g><g transform="translate(947.60 241.40)"><path d="M-3 2 H3 M0 -2.6 V2" stroke="#c5c9d6" stroke-width="1"/></g><g transform="translate(955.40 241.00)"><path d="M-1 -0.5 H1 L0 0.7 Z" fill="#b0b4c0"/></g><g transform="translate(949.20 252.40)"><path d="M-2.6 -0.6 H2.6 M0 -2.8 V2.4" stroke="#c5c9d6" stroke-width="0.9"/></g><g transform="translate(949.20 263.60)"><path d="M-3 2 H3 M0 -2 V2" stroke="#c5c9d6" stroke-width="0.9"/></g><g transform="translate(949.20 276.00)"><ellipse rx="3.2" ry="2.6" fill="#c5c9d6"/></g><g transform="translate(949.20 287.00)"><path d="M-3.6 1.8 H3.4 L2.4 -1.6 H-1.6 Z" fill="#b9bdcb"/></g><g transform="translate(949.20 298.00)"><path d="M-3.2 -1.8 H3.2 V2.2 H-3.2 Z" fill="#bfc3d0"/></g><g transform="translate(949.20 309.60)"><circle r="2.6" fill="#c5c9d6"/></g><g transform="translate(947.60 322.80)"><rect x="-3" y="-3" width="6" height="6" fill="#e6ecf8" stroke="#7a8ab0" stroke-width="0.5"/><path d="M-2 2 Q0 -4 2 2" stroke="#a06a30" stroke-width="1" fill="none"/><path d="M-3 3 H3" stroke="#2a58c0" stroke-width="1"/></g><g transform="translate(955.40 322.40)"><path d="M-1.3 -0.6 H1.3 L0 0.9 Z" fill="#222"/></g><g transform="translate(950.80 335.10)"><rect x="-4" y="-1.2" width="8" height="2.3" rx="0.9" fill="#2fb0b4"/></g><g transform="translate(954.60 345.40)"><path d="M-1 -0.4 H1 L0 0.8 Z" fill="#555"/></g></svg>
<svg width="960" height="525"><path d="M114.20 422.60 L491.15 195.10" stroke="#60249b" stroke-width="5.7" stroke-linecap="round"/><path d="M501.60 188.80 L493.06 202.13 L485.83 190.14 Z" fill="#60249b" stroke="#60249b" stroke-width="0.6" stroke-linejoin="round"/></svg>
</div></body></html>
